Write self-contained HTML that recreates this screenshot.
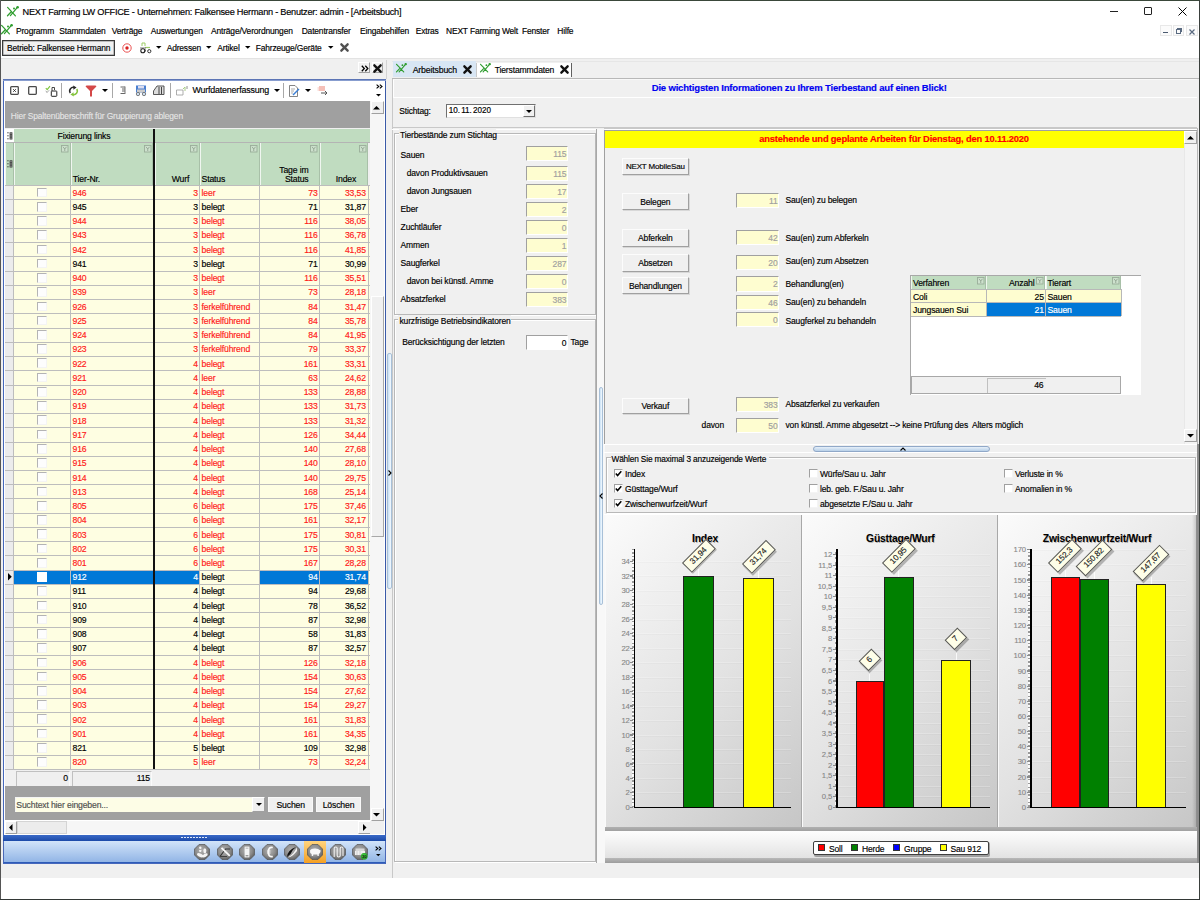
<!DOCTYPE html><html><head><meta charset="utf-8"><style>*{margin:0;padding:0;box-sizing:border-box}
html,body{width:1200px;height:900px;overflow:hidden;background:#f0f0f0;font-family:"Liberation Sans",sans-serif;font-size:8px;color:#000}
div{position:absolute;white-space:nowrap}
svg{position:absolute;overflow:visible}
</style></head><body><div style="left:0px;top:0px;width:1200px;height:58.5px;background:#fff"></div>
<div style="left:0px;top:58px;width:1200px;height:1px;background:#e3e3e3"></div>
<svg style="position:absolute;left:7px;top:6px" width="12" height="12" viewBox="0 0 12 12"><path d="M0.6 1.4 L4.1 5.1 M5.2 6.3 L8.4 9.8 M0.5 9.8 L4.5 5.5 M3.4 9.6 L10.6 1.2" stroke="#2f9d2f" stroke-width="1.25" fill="none" stroke-linecap="round"/><circle cx="7" cy="2.4" r="1" fill="#2f9d2f"/><circle cx="10.6" cy="1.2" r="1.3" fill="#2f9d2f"/></svg>
<div style="left:22.5px;top:7.71px;font-size:9.2px;line-height:9.2px;color:#000;letter-spacing:-0.17px;-webkit-text-stroke-width:0.16px;letter-spacing:-0.25px">NEXT Farming LW OFFICE - Unternehmen: Falkensee Hermann - Benutzer: admin - [Arbeitsbuch]</div>
<div style="left:1110px;top:10.8px;width:8px;height:1.2px;background:#222"></div>
<div style="left:1143.5px;top:7px;width:8px;height:8px;border:1.2px solid #222;border-radius:1px"></div>
<svg style="left:1177.5px;top:7px" width="9" height="9" viewBox="0 0 9 9"><path d="M0.5 0.5 L8.5 8.5 M8.5 0.5 L0.5 8.5" stroke="#000" stroke-width="1"/></svg>
<svg style="position:absolute;left:1px;top:24px" width="12" height="12" viewBox="0 0 12 12"><path d="M0.6 1.4 L4.1 5.1 M5.2 6.3 L8.4 9.8 M0.5 9.8 L4.5 5.5 M3.4 9.6 L10.6 1.2" stroke="#2f9d2f" stroke-width="1.25" fill="none" stroke-linecap="round"/><circle cx="7" cy="2.4" r="1" fill="#2f9d2f"/><circle cx="10.6" cy="1.2" r="1.3" fill="#2f9d2f"/></svg>
<div style="left:16px;top:26.94px;font-size:8.45px;line-height:8.45px;color:#000;letter-spacing:-0.16px;-webkit-text-stroke-width:0.16px;">Programm</div>
<div style="left:59.3px;top:26.94px;font-size:8.45px;line-height:8.45px;color:#000;letter-spacing:-0.16px;-webkit-text-stroke-width:0.16px;">Stammdaten</div>
<div style="left:111.7px;top:26.94px;font-size:8.45px;line-height:8.45px;color:#000;letter-spacing:-0.16px;-webkit-text-stroke-width:0.16px;">Verträge</div>
<div style="left:150.7px;top:26.94px;font-size:8.45px;line-height:8.45px;color:#000;letter-spacing:-0.16px;-webkit-text-stroke-width:0.16px;">Auswertungen</div>
<div style="left:211px;top:26.94px;font-size:8.45px;line-height:8.45px;color:#000;letter-spacing:-0.16px;-webkit-text-stroke-width:0.16px;">Anträge/Verordnungen</div>
<div style="left:301.7px;top:26.94px;font-size:8.45px;line-height:8.45px;color:#000;letter-spacing:-0.16px;-webkit-text-stroke-width:0.16px;">Datentransfer</div>
<div style="left:360px;top:26.94px;font-size:8.45px;line-height:8.45px;color:#000;letter-spacing:-0.16px;-webkit-text-stroke-width:0.16px;">Eingabehilfen</div>
<div style="left:415.7px;top:26.94px;font-size:8.45px;line-height:8.45px;color:#000;letter-spacing:-0.16px;-webkit-text-stroke-width:0.16px;">Extras</div>
<div style="left:446px;top:26.94px;font-size:8.45px;line-height:8.45px;color:#000;letter-spacing:-0.16px;-webkit-text-stroke-width:0.16px;">NEXT Farming Welt</div>
<div style="left:522px;top:26.94px;font-size:8.45px;line-height:8.45px;color:#000;letter-spacing:-0.16px;-webkit-text-stroke-width:0.16px;">Fenster</div>
<div style="left:557.3px;top:26.94px;font-size:8.45px;line-height:8.45px;color:#000;letter-spacing:-0.16px;-webkit-text-stroke-width:0.16px;">Hilfe</div>
<div style="left:1160px;top:25.3px;width:11.5px;height:10.5px;background:#fbfbfb;border:1px solid #e8e8e8"></div>
<div style="left:1172.5px;top:25.3px;width:11.5px;height:10.5px;background:#fbfbfb;border:1px solid #e8e8e8"></div>
<div style="left:1186px;top:25.3px;width:11.5px;height:10.5px;background:#fbfbfb;border:1px solid #e8e8e8"></div>
<div style="left:1162.5px;top:31.8px;width:5px;height:1.6px;background:#4a5a70"></div>
<div style="left:1175.5px;top:29px;width:5px;height:4.5px;border:1px solid #5a6a80"></div>
<div style="left:1176.8px;top:27.8px;width:5px;height:4.5px;border-top:1px solid #5a6a80;border-right:1px solid #5a6a80"></div>
<svg style="left:1188.5px;top:28.5px" width="6" height="6" viewBox="0 0 6 6"><path d="M0.5 0.5 L5.5 5.5 M5.5 0.5 L0.5 5.5" stroke="#5a6a80" stroke-width="1.2"/></svg>
<div style="left:2px;top:40px;width:112.5px;height:15.5px;background:#f0f0f0;border:1px solid #3a3a3a;box-shadow:inset 0 0 0 0.5px #888"></div>
<div style="left:7px;top:43.64px;font-size:8.45px;line-height:8.45px;color:#000;letter-spacing:-0.16px;-webkit-text-stroke-width:0.16px;">Betrieb: Falkensee Hermann</div>
<svg style="left:122px;top:42.7px" width="10" height="10" viewBox="0 0 10 10"><circle cx="5" cy="5" r="4.2" stroke="#e84040" stroke-width="0.9" fill="none"/><circle cx="5" cy="5" r="1.7" fill="#d82020"/></svg>
<svg style="left:138.5px;top:42px" width="14" height="12" viewBox="0 0 14 12"><path d="M3 4 L3 1 L6 1 L6 4" stroke="#9ccc66" stroke-width="1" fill="none"/><path d="M6 5.5 L11 5.5" stroke="#9ccc66" stroke-width="1.2"/><path d="M1 6 L7 6" stroke="#777" stroke-width="1"/><circle cx="3.8" cy="8.8" r="2" fill="none" stroke="#222" stroke-width="1.1"/><circle cx="10.3" cy="9.2" r="1.6" fill="none" stroke="#333" stroke-width="1"/><path d="M6.3 7.5 L6.3 9.5" stroke="#333" stroke-width="0.9"/></svg>
<svg style="position:absolute;left:155.85px;top:45.92px" width="5.5" height="2.75" viewBox="0 0 5.5 2.75"><path d="M0 0 L5.5 0 L2.75 2.75 Z" fill="#000"/></svg>
<div style="left:166.7px;top:43.64px;font-size:8.45px;line-height:8.45px;color:#000;letter-spacing:-0.16px;-webkit-text-stroke-width:0.16px;">Adressen</div>
<svg style="position:absolute;left:205.85px;top:45.92px" width="5.5" height="2.75" viewBox="0 0 5.5 2.75"><path d="M0 0 L5.5 0 L2.75 2.75 Z" fill="#000"/></svg>
<div style="left:217.3px;top:43.64px;font-size:8.45px;line-height:8.45px;color:#000;letter-spacing:-0.16px;-webkit-text-stroke-width:0.16px;">Artikel</div>
<svg style="position:absolute;left:244.85px;top:45.92px" width="5.5" height="2.75" viewBox="0 0 5.5 2.75"><path d="M0 0 L5.5 0 L2.75 2.75 Z" fill="#000"/></svg>
<div style="left:255.7px;top:43.64px;font-size:8.45px;line-height:8.45px;color:#000;letter-spacing:-0.16px;-webkit-text-stroke-width:0.16px;">Fahrzeuge/Geräte</div>
<svg style="position:absolute;left:327.65px;top:45.92px" width="5.5" height="2.75" viewBox="0 0 5.5 2.75"><path d="M0 0 L5.5 0 L2.75 2.75 Z" fill="#000"/></svg>
<svg style="position:absolute;left:340px;top:43px" width="9" height="9" viewBox="0 0 10 10"><path d="M1.5 1.5 L8.5 8.5 M8.5 1.5 L1.5 8.5" stroke="#505050" stroke-width="2.6" stroke-linecap="round"/></svg>
<div style="left:0px;top:0px;width:1200px;height:1px;background:#3a483a"></div>
<div style="left:0px;top:0px;width:1px;height:900px;background:#555"></div>
<div style="left:1199px;top:0px;width:1px;height:900px;background:#3a3f3c"></div>
<div style="left:0px;top:899px;width:1200px;height:1px;background:#333836"></div>
<div style="left:1px;top:877.5px;width:1198px;height:21.5px;background:#fff"></div>
<div style="left:358.3px;top:62.2px;width:11.7px;height:11.2px;background:#f0f0f0;border-top:1px solid #fff;border-left:1px solid #fff;border-right:1px solid #a0a0a0;border-bottom:1px solid #a0a0a0"></div>
<svg style="position:absolute;left:360.5px;top:64.5px" width="8" height="7" viewBox="0 0 8 7"><path d="M0.8 0.8 L3.3 3.5 L0.8 6.2 M4.3 0.8 L6.8 3.5 L4.3 6.2" stroke="#000" stroke-width="1.3" fill="none"/></svg>
<div style="left:371.6px;top:62.2px;width:11.7px;height:11.2px;background:#f0f0f0;border-top:1px solid #fff;border-left:1px solid #fff;border-right:1px solid #a0a0a0;border-bottom:1px solid #a0a0a0"></div>
<svg style="position:absolute;left:373px;top:63.5px" width="9" height="9" viewBox="0 0 10 10"><path d="M1.5 1.5 L8.5 8.5 M8.5 1.5 L1.5 8.5" stroke="#111" stroke-width="2.6" stroke-linecap="round"/></svg>
<div style="left:3.2px;top:78.8px;width:382.5px;height:785px;border:1px solid #4668bc;border-right:1.4px solid #3a5aa8;background:#fff"></div>
<div style="left:3.2px;top:78.6px;width:382.5px;height:2px;background:linear-gradient(#4560a8,#9fb2dc)"></div>
<svg style="left:10px;top:85.8px" width="9" height="9" viewBox="0 0 9 9"><rect x="0.7" y="0.7" width="7.6" height="7.6" rx="0.8" fill="#fff" stroke="#4a4a4a" stroke-width="1.3"/><path d="M3.2 3.2 L5.8 5.8 M5.8 3.2 L3.2 5.8" stroke="#222" stroke-width="0.9"/></svg>
<svg style="left:28.4px;top:85.8px" width="9" height="9" viewBox="0 0 9 9"><rect x="0.7" y="0.7" width="7.6" height="7.6" rx="0.8" fill="#fff" stroke="#4a4a4a" stroke-width="1.3"/></svg>
<svg style="left:45px;top:84.5px" width="13" height="12" viewBox="0 0 13 12"><path d="M0.8 3.2 L2.2 4.6 L5 1.2" stroke="#7cc43c" stroke-width="1.1" fill="none"/><path d="M0.8 6.2 L2.2 7.3 L4.2 5.2" stroke="#4a4a4a" stroke-width="0.9" fill="none" stroke-dasharray="1 0.6"/><path d="M7 2.5 L9.5 2.5 L9.5 5 M7 2.5 L7 6" stroke="#333" stroke-width="0.9" fill="none"/><rect x="6.3" y="6" width="5.5" height="5.3" rx="0.6" fill="#fff" stroke="#222" stroke-width="1"/></svg>
<div style="left:61.3px;top:83px;width:1px;height:15px;background:#a8a8a8"></div>
<svg style="left:67.5px;top:84.5px" width="11" height="12" viewBox="0 0 11 12"><path d="M6.5 2.6 A3.6 3.6 0 0 0 2.3 8" stroke="#2a2a2a" stroke-width="1.5" fill="none"/><path d="M5.2 0.4 L8.6 2.6 L5.4 4.8 Z" fill="#2a2a2a"/><path d="M4.5 9.4 A3.6 3.6 0 0 0 8.7 4" stroke="#86c440" stroke-width="1.5" fill="none"/><path d="M5.8 11.6 L2.4 9.4 L5.6 7.2 Z" fill="#86c440"/></svg>
<svg style="left:85px;top:84.5px" width="12" height="12" viewBox="0 0 12 12"><path d="M0.6 1.6 Q0.6 0.6 2 0.6 L10 0.6 Q11.4 0.6 11.4 1.6 L7 6 L7 11.4 L5 11.4 L5 6 Z" fill="#d44848"/></svg>
<svg style="position:absolute;left:101.5px;top:89px" width="6" height="3" viewBox="0 0 6 3"><path d="M0 0 L6 0 L3 3 Z" fill="#000"/></svg>
<div style="left:112px;top:83px;width:1px;height:15px;background:#a8a8a8"></div>
<svg style="left:119.5px;top:86px" width="6" height="9" viewBox="0 0 6 9"><path d="M0.5 1 L5 1 M2 3 L5 3 M2 5 L5 5 M0.5 7.5 L5 7.5" stroke="#555" stroke-width="0.9"/><path d="M5 0.5 L5 8" stroke="#777" stroke-width="1"/></svg>
<svg style="left:134.5px;top:85px" width="12" height="11" viewBox="0 0 12 11"><rect x="1" y="0.5" width="10" height="7" fill="#4a7fd0"/><rect x="3" y="1" width="6" height="2.5" fill="#dde"/><rect x="2" y="4.5" width="8" height="3" fill="#ccc"/><circle cx="3" cy="9" r="1.7" fill="#cde" stroke="#555" stroke-width="0.7"/><circle cx="9" cy="9" r="1.7" fill="#cde" stroke="#555" stroke-width="0.7"/></svg>
<svg style="left:152.5px;top:85px" width="12" height="11" viewBox="0 0 12 11"><path d="M0.5 9.5 L0.5 6 L4 1 L11 1 L11 9.5 Z" fill="#ddd" stroke="#444" stroke-width="0.9"/><path d="M6 2 L6 9 M8.5 2 L8.5 9" stroke="#444" stroke-width="1"/></svg>
<div style="left:170.3px;top:83px;width:1px;height:15px;background:#a8a8a8"></div>
<svg style="left:175.5px;top:85px" width="12" height="11" viewBox="0 0 12 11"><path d="M0.5 5 L7 5 L7 10 L0.5 10 Z" fill="#fff" stroke="#999" stroke-width="0.8"/><path d="M7 4 L9 2 L9 6" stroke="#ac8" stroke-width="1" fill="none"/><path d="M11 1 L11 4" stroke="#777" stroke-width="0.8"/></svg>
<div style="left:192.5px;top:86.3px;font-size:8.86px;line-height:8.86px;color:#000;letter-spacing:-0.17px;-webkit-text-stroke-width:0.16px;">Wurfdatenerfassung</div>
<svg style="position:absolute;left:273.5px;top:89px" width="6" height="3" viewBox="0 0 6 3"><path d="M0 0 L6 0 L3 3 Z" fill="#000"/></svg>
<div style="left:283px;top:83px;width:1px;height:15px;background:#a8a8a8"></div>
<svg style="left:289px;top:84.5px" width="11" height="12" viewBox="0 0 11 12"><path d="M0.5 0.5 L6 0.5 L8.5 3 L8.5 11.5 L0.5 11.5 Z" fill="#fff" stroke="#666" stroke-width="0.8"/><path d="M2 4 L6 4 M2 6 L5 6 M2 8 L4 8" stroke="#888" stroke-width="0.7"/><path d="M4 10 L10 4" stroke="#3a7fd5" stroke-width="1.4"/></svg>
<svg style="position:absolute;left:304.5px;top:89px" width="6" height="3" viewBox="0 0 6 3"><path d="M0 0 L6 0 L3 3 Z" fill="#000"/></svg>
<svg style="left:316.5px;top:85px" width="11" height="10" viewBox="0 0 11 10"><rect x="2" y="1" width="6" height="5" fill="#f5c0b8"/><path d="M0.5 3 L3 3 M0.5 5 L2 5" stroke="#f5c0b8" stroke-width="1"/><path d="M4 8 L10 8 M8 6 L10 8 L8 10" stroke="#555" stroke-width="1" fill="none"/></svg>
<svg style="left:375.6px;top:84.2px" width="7" height="5" viewBox="0 0 7 5"><path d="M0.6 0.6 L2.8 2.5 L0.6 4.4 M3.8 0.6 L6 2.5 L3.8 4.4" stroke="#000" stroke-width="1.1" fill="none"/></svg>
<svg style="position:absolute;left:375.9px;top:94.35px" width="5" height="2.5" viewBox="0 0 5 2.5"><path d="M0 0 L5 0 L2.5 2.5 Z" fill="#000"/></svg>
<div style="left:4.5px;top:101.3px;width:365.8px;height:26.5px;background:#a0a0a0"></div>
<div style="left:10.8px;top:111.84px;font-size:8.45px;line-height:8.45px;color:#e6e6e6;letter-spacing:-0.16px;-webkit-text-stroke-width:0.1px;">Hier Spaltenüberschrift für Gruppierung ablegen</div>
<div style="left:370.3px;top:101.3px;width:13.5px;height:719px;background:#f6f6f6"></div>
<div style="left:370.5px;top:101.3px;width:13px;height:13px;background:#f0f0f0;border-top:1px solid #fff;border-left:1px solid #fff;border-right:1px solid #a0a0a0;border-bottom:1px solid #a0a0a0"></div>
<svg style="position:absolute;left:373.4px;top:106.25px" width="7" height="3.5" viewBox="0 0 7 3.5"><path d="M0 3.5 L7 3.5 L3.5 0 Z" fill="#000"/></svg>
<div style="left:370.6px;top:295.5px;width:13px;height:241px;background:#f0f0f0;border-top:1px solid #fff;border-left:1px solid #fff;border-right:1px solid #a8a8a8;border-bottom:1px solid #a8a8a8"></div>
<div style="left:370.5px;top:807.5px;width:13px;height:13px;background:#f0f0f0;border-top:1px solid #fff;border-left:1px solid #fff;border-right:1px solid #a0a0a0;border-bottom:1px solid #a0a0a0"></div>
<svg style="position:absolute;left:373.4px;top:812.55px" width="7" height="3.5" viewBox="0 0 7 3.5"><path d="M0 0 L7 0 L3.5 3.5 Z" fill="#000"/></svg>
<div style="left:4.5px;top:128px;width:365.8px;height:57.5px;background:#f0f0f0"></div>
<div style="left:14px;top:128.6px;width:139.5px;height:13.3px;background:#c0dcc0"></div>
<div style="left:155px;top:128.6px;width:215.3px;height:13.3px;background:#c0dcc0"></div>
<div style="left:4.5px;top:128.6px;width:9px;height:13.3px;background:#fff"></div>
<div style="left:-216px;top:131.96px;width:600px;text-align:center;font-size:8.67px;line-height:8.67px;color:#000;letter-spacing:-0.16px;-webkit-text-stroke-width:0.16px;">Fixierung links</div>
<div style="left:4.5px;top:141.6px;width:365.8px;height:1.3px;background:#b4b4b4"></div>
<div style="left:4.5px;top:142.8px;width:9.1px;height:42.4px;background:#c0dcc0;border-left:1px solid #f0f6f0;border-right:1px solid #a8c0a8"></div>
<div style="left:13.6px;top:142.8px;width:57px;height:42.4px;background:#c0dcc0;border-left:1px solid #f0f6f0;border-right:1px solid #a8c0a8"></div>
<div style="left:70.6px;top:142.8px;width:82.4px;height:42.4px;background:#c0dcc0;border-left:1px solid #f0f6f0;border-right:1px solid #a8c0a8"></div>
<div style="left:155px;top:142.8px;width:44.6px;height:42.4px;background:#c0dcc0;border-left:1px solid #f0f6f0;border-right:1px solid #a8c0a8"></div>
<div style="left:199.6px;top:142.8px;width:60px;height:42.4px;background:#c0dcc0;border-left:1px solid #f0f6f0;border-right:1px solid #a8c0a8"></div>
<div style="left:259.6px;top:142.8px;width:60px;height:42.4px;background:#c0dcc0;border-left:1px solid #f0f6f0;border-right:1px solid #a8c0a8"></div>
<div style="left:319.6px;top:142.8px;width:48.4px;height:42.4px;background:#c0dcc0;border-left:1px solid #f0f6f0;border-right:1px solid #a8c0a8"></div>
<svg style="left:61px;top:144.8px" width="7.5" height="7.5" viewBox="0 0 7.5 7.5"><rect x="0.5" y="0.5" width="6.5" height="6.5" fill="#cde1cd" stroke="#9aae9a" stroke-width="0.9"/><path d="M2 1.8 L3.75 4 L5.5 1.8 M3.75 4 L3.75 6" stroke="#8a9c8a" stroke-width="0.8" fill="none"/></svg>
<svg style="left:143.5px;top:144.8px" width="7.5" height="7.5" viewBox="0 0 7.5 7.5"><rect x="0.5" y="0.5" width="6.5" height="6.5" fill="#cde1cd" stroke="#9aae9a" stroke-width="0.9"/><path d="M2 1.8 L3.75 4 L5.5 1.8 M3.75 4 L3.75 6" stroke="#8a9c8a" stroke-width="0.8" fill="none"/></svg>
<svg style="left:190px;top:144.8px" width="7.5" height="7.5" viewBox="0 0 7.5 7.5"><rect x="0.5" y="0.5" width="6.5" height="6.5" fill="#cde1cd" stroke="#9aae9a" stroke-width="0.9"/><path d="M2 1.8 L3.75 4 L5.5 1.8 M3.75 4 L3.75 6" stroke="#8a9c8a" stroke-width="0.8" fill="none"/></svg>
<svg style="left:250px;top:144.8px" width="7.5" height="7.5" viewBox="0 0 7.5 7.5"><rect x="0.5" y="0.5" width="6.5" height="6.5" fill="#cde1cd" stroke="#9aae9a" stroke-width="0.9"/><path d="M2 1.8 L3.75 4 L5.5 1.8 M3.75 4 L3.75 6" stroke="#8a9c8a" stroke-width="0.8" fill="none"/></svg>
<svg style="left:310px;top:144.8px" width="7.5" height="7.5" viewBox="0 0 7.5 7.5"><rect x="0.5" y="0.5" width="6.5" height="6.5" fill="#cde1cd" stroke="#9aae9a" stroke-width="0.9"/><path d="M2 1.8 L3.75 4 L5.5 1.8 M3.75 4 L3.75 6" stroke="#8a9c8a" stroke-width="0.8" fill="none"/></svg>
<svg style="left:358.5px;top:144.8px" width="7.5" height="7.5" viewBox="0 0 7.5 7.5"><rect x="0.5" y="0.5" width="6.5" height="6.5" fill="#cde1cd" stroke="#9aae9a" stroke-width="0.9"/><path d="M2 1.8 L3.75 4 L5.5 1.8 M3.75 4 L3.75 6" stroke="#8a9c8a" stroke-width="0.8" fill="none"/></svg>
<svg style="left:6.5px;top:131.8px" width="6" height="8" viewBox="0 0 6 8"><rect x="2.6" y="0.3" width="2.8" height="7.2" fill="#3c3c3c"/><path d="M3 1.5 L5 1.5 M3 3.2 L5 3.2 M3 4.9 L5 4.9 M3 6.4 L5 6.4" stroke="#9a9a9a" stroke-width="0.6"/><path d="M0.3 0.8 L1.6 0.8 M0.3 3.8 L1.6 3.8 M0.3 6.8 L1.6 6.8" stroke="#333" stroke-width="1"/></svg>
<svg style="left:6.5px;top:160px" width="6" height="8" viewBox="0 0 6 8"><rect x="2.6" y="0.3" width="2.8" height="7.2" fill="#3c3c3c"/><path d="M3 1.5 L5 1.5 M3 3.2 L5 3.2 M3 4.9 L5 4.9 M3 6.4 L5 6.4" stroke="#9a9a9a" stroke-width="0.6"/><path d="M0.3 0.8 L1.6 0.8 M0.3 3.8 L1.6 3.8 M0.3 6.8 L1.6 6.8" stroke="#333" stroke-width="1"/></svg>
<div style="left:72.8px;top:175.46px;font-size:8.67px;line-height:8.67px;color:#000;letter-spacing:-0.16px;-webkit-text-stroke-width:0.16px;">Tier-Nr.</div>
<div style="left:-210.8px;top:175.46px;width:400px;text-align:right;font-size:8.67px;line-height:8.67px;color:#000;letter-spacing:-0.16px;-webkit-text-stroke-width:0.16px;">Wurf</div>
<div style="left:201.6px;top:175.46px;font-size:8.67px;line-height:8.67px;color:#000;letter-spacing:-0.16px;-webkit-text-stroke-width:0.16px;">Status</div>
<div style="left:-91.5px;top:165.56px;width:400px;text-align:right;font-size:8.67px;line-height:8.67px;color:#000;letter-spacing:-0.16px;-webkit-text-stroke-width:0.16px;">Tage im</div>
<div style="left:-91.5px;top:175.46px;width:400px;text-align:right;font-size:8.67px;line-height:8.67px;color:#000;letter-spacing:-0.16px;-webkit-text-stroke-width:0.16px;">Status</div>
<div style="left:-43.8px;top:175.46px;width:400px;text-align:right;font-size:8.67px;line-height:8.67px;color:#000;letter-spacing:-0.16px;-webkit-text-stroke-width:0.16px;">Index</div>
<div style="left:14px;top:185.2px;width:356.2px;height:583.84px;background:#fefee2"></div>
<div style="left:4.5px;top:185.2px;width:9.5px;height:583.84px;background:#ececec"></div>
<div style="left:4.5px;top:185.2px;width:365.7px;height:1px;background:#bdbdbd"></div>
<div style="left:37.3px;top:187.6px;width:9.7px;height:9.7px;background:#fdfdfd;border-top:1.5px solid #b4b4b4;border-left:1.5px solid #b4b4b4;border-right:1px solid #f4f4f4;border-bottom:1px solid #f4f4f4"></div>
<div style="left:72.5px;top:188.76px;font-size:8.67px;line-height:8.67px;color:#ff1a1a;letter-spacing:-0.16px;-webkit-text-stroke-width:0.16px;">946</div>
<div style="left:-202px;top:188.76px;width:400px;text-align:right;font-size:8.67px;line-height:8.67px;color:#ff1a1a;letter-spacing:-0.16px;-webkit-text-stroke-width:0.16px;">3</div>
<div style="left:201.6px;top:188.76px;font-size:8.67px;line-height:8.67px;color:#ff1a1a;letter-spacing:-0.16px;-webkit-text-stroke-width:0.16px;">leer</div>
<div style="left:-82.4px;top:188.76px;width:400px;text-align:right;font-size:8.67px;line-height:8.67px;color:#ff1a1a;letter-spacing:-0.16px;-webkit-text-stroke-width:0.16px;">73</div>
<div style="left:-34.2px;top:188.76px;width:400px;text-align:right;font-size:8.67px;line-height:8.67px;color:#ff1a1a;letter-spacing:-0.16px;-webkit-text-stroke-width:0.16px;">33,53</div>
<div style="left:4.5px;top:199.44px;width:365.7px;height:1px;background:#bdbdbd"></div>
<div style="left:37.3px;top:201.84px;width:9.7px;height:9.7px;background:#fdfdfd;border-top:1.5px solid #b4b4b4;border-left:1.5px solid #b4b4b4;border-right:1px solid #f4f4f4;border-bottom:1px solid #f4f4f4"></div>
<div style="left:72.5px;top:203px;font-size:8.67px;line-height:8.67px;color:#000;letter-spacing:-0.16px;-webkit-text-stroke-width:0.16px;">945</div>
<div style="left:-202px;top:203px;width:400px;text-align:right;font-size:8.67px;line-height:8.67px;color:#000;letter-spacing:-0.16px;-webkit-text-stroke-width:0.16px;">3</div>
<div style="left:201.6px;top:203px;font-size:8.67px;line-height:8.67px;color:#000;letter-spacing:-0.16px;-webkit-text-stroke-width:0.16px;">belegt</div>
<div style="left:-82.4px;top:203px;width:400px;text-align:right;font-size:8.67px;line-height:8.67px;color:#000;letter-spacing:-0.16px;-webkit-text-stroke-width:0.16px;">71</div>
<div style="left:-34.2px;top:203px;width:400px;text-align:right;font-size:8.67px;line-height:8.67px;color:#000;letter-spacing:-0.16px;-webkit-text-stroke-width:0.16px;">31,87</div>
<div style="left:4.5px;top:213.68px;width:365.7px;height:1px;background:#bdbdbd"></div>
<div style="left:37.3px;top:216.08px;width:9.7px;height:9.7px;background:#fdfdfd;border-top:1.5px solid #b4b4b4;border-left:1.5px solid #b4b4b4;border-right:1px solid #f4f4f4;border-bottom:1px solid #f4f4f4"></div>
<div style="left:72.5px;top:217.24px;font-size:8.67px;line-height:8.67px;color:#ff1a1a;letter-spacing:-0.16px;-webkit-text-stroke-width:0.16px;">944</div>
<div style="left:-202px;top:217.24px;width:400px;text-align:right;font-size:8.67px;line-height:8.67px;color:#ff1a1a;letter-spacing:-0.16px;-webkit-text-stroke-width:0.16px;">3</div>
<div style="left:201.6px;top:217.24px;font-size:8.67px;line-height:8.67px;color:#ff1a1a;letter-spacing:-0.16px;-webkit-text-stroke-width:0.16px;">belegt</div>
<div style="left:-82.4px;top:217.24px;width:400px;text-align:right;font-size:8.67px;line-height:8.67px;color:#ff1a1a;letter-spacing:-0.16px;-webkit-text-stroke-width:0.16px;">116</div>
<div style="left:-34.2px;top:217.24px;width:400px;text-align:right;font-size:8.67px;line-height:8.67px;color:#ff1a1a;letter-spacing:-0.16px;-webkit-text-stroke-width:0.16px;">38,05</div>
<div style="left:4.5px;top:227.92px;width:365.7px;height:1px;background:#bdbdbd"></div>
<div style="left:37.3px;top:230.32px;width:9.7px;height:9.7px;background:#fdfdfd;border-top:1.5px solid #b4b4b4;border-left:1.5px solid #b4b4b4;border-right:1px solid #f4f4f4;border-bottom:1px solid #f4f4f4"></div>
<div style="left:72.5px;top:231.48px;font-size:8.67px;line-height:8.67px;color:#ff1a1a;letter-spacing:-0.16px;-webkit-text-stroke-width:0.16px;">943</div>
<div style="left:-202px;top:231.48px;width:400px;text-align:right;font-size:8.67px;line-height:8.67px;color:#ff1a1a;letter-spacing:-0.16px;-webkit-text-stroke-width:0.16px;">3</div>
<div style="left:201.6px;top:231.48px;font-size:8.67px;line-height:8.67px;color:#ff1a1a;letter-spacing:-0.16px;-webkit-text-stroke-width:0.16px;">belegt</div>
<div style="left:-82.4px;top:231.48px;width:400px;text-align:right;font-size:8.67px;line-height:8.67px;color:#ff1a1a;letter-spacing:-0.16px;-webkit-text-stroke-width:0.16px;">116</div>
<div style="left:-34.2px;top:231.48px;width:400px;text-align:right;font-size:8.67px;line-height:8.67px;color:#ff1a1a;letter-spacing:-0.16px;-webkit-text-stroke-width:0.16px;">36,78</div>
<div style="left:4.5px;top:242.16px;width:365.7px;height:1px;background:#bdbdbd"></div>
<div style="left:37.3px;top:244.56px;width:9.7px;height:9.7px;background:#fdfdfd;border-top:1.5px solid #b4b4b4;border-left:1.5px solid #b4b4b4;border-right:1px solid #f4f4f4;border-bottom:1px solid #f4f4f4"></div>
<div style="left:72.5px;top:245.72px;font-size:8.67px;line-height:8.67px;color:#ff1a1a;letter-spacing:-0.16px;-webkit-text-stroke-width:0.16px;">942</div>
<div style="left:-202px;top:245.72px;width:400px;text-align:right;font-size:8.67px;line-height:8.67px;color:#ff1a1a;letter-spacing:-0.16px;-webkit-text-stroke-width:0.16px;">3</div>
<div style="left:201.6px;top:245.72px;font-size:8.67px;line-height:8.67px;color:#ff1a1a;letter-spacing:-0.16px;-webkit-text-stroke-width:0.16px;">belegt</div>
<div style="left:-82.4px;top:245.72px;width:400px;text-align:right;font-size:8.67px;line-height:8.67px;color:#ff1a1a;letter-spacing:-0.16px;-webkit-text-stroke-width:0.16px;">116</div>
<div style="left:-34.2px;top:245.72px;width:400px;text-align:right;font-size:8.67px;line-height:8.67px;color:#ff1a1a;letter-spacing:-0.16px;-webkit-text-stroke-width:0.16px;">41,85</div>
<div style="left:4.5px;top:256.4px;width:365.7px;height:1px;background:#bdbdbd"></div>
<div style="left:37.3px;top:258.8px;width:9.7px;height:9.7px;background:#fdfdfd;border-top:1.5px solid #b4b4b4;border-left:1.5px solid #b4b4b4;border-right:1px solid #f4f4f4;border-bottom:1px solid #f4f4f4"></div>
<div style="left:72.5px;top:259.96px;font-size:8.67px;line-height:8.67px;color:#000;letter-spacing:-0.16px;-webkit-text-stroke-width:0.16px;">941</div>
<div style="left:-202px;top:259.96px;width:400px;text-align:right;font-size:8.67px;line-height:8.67px;color:#000;letter-spacing:-0.16px;-webkit-text-stroke-width:0.16px;">3</div>
<div style="left:201.6px;top:259.96px;font-size:8.67px;line-height:8.67px;color:#000;letter-spacing:-0.16px;-webkit-text-stroke-width:0.16px;">belegt</div>
<div style="left:-82.4px;top:259.96px;width:400px;text-align:right;font-size:8.67px;line-height:8.67px;color:#000;letter-spacing:-0.16px;-webkit-text-stroke-width:0.16px;">71</div>
<div style="left:-34.2px;top:259.96px;width:400px;text-align:right;font-size:8.67px;line-height:8.67px;color:#000;letter-spacing:-0.16px;-webkit-text-stroke-width:0.16px;">30,99</div>
<div style="left:4.5px;top:270.64px;width:365.7px;height:1px;background:#bdbdbd"></div>
<div style="left:37.3px;top:273.04px;width:9.7px;height:9.7px;background:#fdfdfd;border-top:1.5px solid #b4b4b4;border-left:1.5px solid #b4b4b4;border-right:1px solid #f4f4f4;border-bottom:1px solid #f4f4f4"></div>
<div style="left:72.5px;top:274.2px;font-size:8.67px;line-height:8.67px;color:#ff1a1a;letter-spacing:-0.16px;-webkit-text-stroke-width:0.16px;">940</div>
<div style="left:-202px;top:274.2px;width:400px;text-align:right;font-size:8.67px;line-height:8.67px;color:#ff1a1a;letter-spacing:-0.16px;-webkit-text-stroke-width:0.16px;">3</div>
<div style="left:201.6px;top:274.2px;font-size:8.67px;line-height:8.67px;color:#ff1a1a;letter-spacing:-0.16px;-webkit-text-stroke-width:0.16px;">belegt</div>
<div style="left:-82.4px;top:274.2px;width:400px;text-align:right;font-size:8.67px;line-height:8.67px;color:#ff1a1a;letter-spacing:-0.16px;-webkit-text-stroke-width:0.16px;">116</div>
<div style="left:-34.2px;top:274.2px;width:400px;text-align:right;font-size:8.67px;line-height:8.67px;color:#ff1a1a;letter-spacing:-0.16px;-webkit-text-stroke-width:0.16px;">35,51</div>
<div style="left:4.5px;top:284.88px;width:365.7px;height:1px;background:#bdbdbd"></div>
<div style="left:37.3px;top:287.28px;width:9.7px;height:9.7px;background:#fdfdfd;border-top:1.5px solid #b4b4b4;border-left:1.5px solid #b4b4b4;border-right:1px solid #f4f4f4;border-bottom:1px solid #f4f4f4"></div>
<div style="left:72.5px;top:288.44px;font-size:8.67px;line-height:8.67px;color:#ff1a1a;letter-spacing:-0.16px;-webkit-text-stroke-width:0.16px;">939</div>
<div style="left:-202px;top:288.44px;width:400px;text-align:right;font-size:8.67px;line-height:8.67px;color:#ff1a1a;letter-spacing:-0.16px;-webkit-text-stroke-width:0.16px;">3</div>
<div style="left:201.6px;top:288.44px;font-size:8.67px;line-height:8.67px;color:#ff1a1a;letter-spacing:-0.16px;-webkit-text-stroke-width:0.16px;">leer</div>
<div style="left:-82.4px;top:288.44px;width:400px;text-align:right;font-size:8.67px;line-height:8.67px;color:#ff1a1a;letter-spacing:-0.16px;-webkit-text-stroke-width:0.16px;">73</div>
<div style="left:-34.2px;top:288.44px;width:400px;text-align:right;font-size:8.67px;line-height:8.67px;color:#ff1a1a;letter-spacing:-0.16px;-webkit-text-stroke-width:0.16px;">28,18</div>
<div style="left:4.5px;top:299.12px;width:365.7px;height:1px;background:#bdbdbd"></div>
<div style="left:37.3px;top:301.52px;width:9.7px;height:9.7px;background:#fdfdfd;border-top:1.5px solid #b4b4b4;border-left:1.5px solid #b4b4b4;border-right:1px solid #f4f4f4;border-bottom:1px solid #f4f4f4"></div>
<div style="left:72.5px;top:302.68px;font-size:8.67px;line-height:8.67px;color:#ff1a1a;letter-spacing:-0.16px;-webkit-text-stroke-width:0.16px;">926</div>
<div style="left:-202px;top:302.68px;width:400px;text-align:right;font-size:8.67px;line-height:8.67px;color:#ff1a1a;letter-spacing:-0.16px;-webkit-text-stroke-width:0.16px;">3</div>
<div style="left:201.6px;top:302.68px;font-size:8.67px;line-height:8.67px;color:#ff1a1a;letter-spacing:-0.16px;-webkit-text-stroke-width:0.16px;">ferkelführend</div>
<div style="left:-82.4px;top:302.68px;width:400px;text-align:right;font-size:8.67px;line-height:8.67px;color:#ff1a1a;letter-spacing:-0.16px;-webkit-text-stroke-width:0.16px;">84</div>
<div style="left:-34.2px;top:302.68px;width:400px;text-align:right;font-size:8.67px;line-height:8.67px;color:#ff1a1a;letter-spacing:-0.16px;-webkit-text-stroke-width:0.16px;">31,47</div>
<div style="left:4.5px;top:313.36px;width:365.7px;height:1px;background:#bdbdbd"></div>
<div style="left:37.3px;top:315.76px;width:9.7px;height:9.7px;background:#fdfdfd;border-top:1.5px solid #b4b4b4;border-left:1.5px solid #b4b4b4;border-right:1px solid #f4f4f4;border-bottom:1px solid #f4f4f4"></div>
<div style="left:72.5px;top:316.92px;font-size:8.67px;line-height:8.67px;color:#ff1a1a;letter-spacing:-0.16px;-webkit-text-stroke-width:0.16px;">925</div>
<div style="left:-202px;top:316.92px;width:400px;text-align:right;font-size:8.67px;line-height:8.67px;color:#ff1a1a;letter-spacing:-0.16px;-webkit-text-stroke-width:0.16px;">3</div>
<div style="left:201.6px;top:316.92px;font-size:8.67px;line-height:8.67px;color:#ff1a1a;letter-spacing:-0.16px;-webkit-text-stroke-width:0.16px;">ferkelführend</div>
<div style="left:-82.4px;top:316.92px;width:400px;text-align:right;font-size:8.67px;line-height:8.67px;color:#ff1a1a;letter-spacing:-0.16px;-webkit-text-stroke-width:0.16px;">84</div>
<div style="left:-34.2px;top:316.92px;width:400px;text-align:right;font-size:8.67px;line-height:8.67px;color:#ff1a1a;letter-spacing:-0.16px;-webkit-text-stroke-width:0.16px;">35,78</div>
<div style="left:4.5px;top:327.6px;width:365.7px;height:1px;background:#bdbdbd"></div>
<div style="left:37.3px;top:330px;width:9.7px;height:9.7px;background:#fdfdfd;border-top:1.5px solid #b4b4b4;border-left:1.5px solid #b4b4b4;border-right:1px solid #f4f4f4;border-bottom:1px solid #f4f4f4"></div>
<div style="left:72.5px;top:331.16px;font-size:8.67px;line-height:8.67px;color:#ff1a1a;letter-spacing:-0.16px;-webkit-text-stroke-width:0.16px;">924</div>
<div style="left:-202px;top:331.16px;width:400px;text-align:right;font-size:8.67px;line-height:8.67px;color:#ff1a1a;letter-spacing:-0.16px;-webkit-text-stroke-width:0.16px;">3</div>
<div style="left:201.6px;top:331.16px;font-size:8.67px;line-height:8.67px;color:#ff1a1a;letter-spacing:-0.16px;-webkit-text-stroke-width:0.16px;">ferkelführend</div>
<div style="left:-82.4px;top:331.16px;width:400px;text-align:right;font-size:8.67px;line-height:8.67px;color:#ff1a1a;letter-spacing:-0.16px;-webkit-text-stroke-width:0.16px;">84</div>
<div style="left:-34.2px;top:331.16px;width:400px;text-align:right;font-size:8.67px;line-height:8.67px;color:#ff1a1a;letter-spacing:-0.16px;-webkit-text-stroke-width:0.16px;">41,95</div>
<div style="left:4.5px;top:341.84px;width:365.7px;height:1px;background:#bdbdbd"></div>
<div style="left:37.3px;top:344.24px;width:9.7px;height:9.7px;background:#fdfdfd;border-top:1.5px solid #b4b4b4;border-left:1.5px solid #b4b4b4;border-right:1px solid #f4f4f4;border-bottom:1px solid #f4f4f4"></div>
<div style="left:72.5px;top:345.4px;font-size:8.67px;line-height:8.67px;color:#ff1a1a;letter-spacing:-0.16px;-webkit-text-stroke-width:0.16px;">923</div>
<div style="left:-202px;top:345.4px;width:400px;text-align:right;font-size:8.67px;line-height:8.67px;color:#ff1a1a;letter-spacing:-0.16px;-webkit-text-stroke-width:0.16px;">3</div>
<div style="left:201.6px;top:345.4px;font-size:8.67px;line-height:8.67px;color:#ff1a1a;letter-spacing:-0.16px;-webkit-text-stroke-width:0.16px;">ferkelführend</div>
<div style="left:-82.4px;top:345.4px;width:400px;text-align:right;font-size:8.67px;line-height:8.67px;color:#ff1a1a;letter-spacing:-0.16px;-webkit-text-stroke-width:0.16px;">79</div>
<div style="left:-34.2px;top:345.4px;width:400px;text-align:right;font-size:8.67px;line-height:8.67px;color:#ff1a1a;letter-spacing:-0.16px;-webkit-text-stroke-width:0.16px;">33,37</div>
<div style="left:4.5px;top:356.08px;width:365.7px;height:1px;background:#bdbdbd"></div>
<div style="left:37.3px;top:358.48px;width:9.7px;height:9.7px;background:#fdfdfd;border-top:1.5px solid #b4b4b4;border-left:1.5px solid #b4b4b4;border-right:1px solid #f4f4f4;border-bottom:1px solid #f4f4f4"></div>
<div style="left:72.5px;top:359.64px;font-size:8.67px;line-height:8.67px;color:#ff1a1a;letter-spacing:-0.16px;-webkit-text-stroke-width:0.16px;">922</div>
<div style="left:-202px;top:359.64px;width:400px;text-align:right;font-size:8.67px;line-height:8.67px;color:#ff1a1a;letter-spacing:-0.16px;-webkit-text-stroke-width:0.16px;">4</div>
<div style="left:201.6px;top:359.64px;font-size:8.67px;line-height:8.67px;color:#ff1a1a;letter-spacing:-0.16px;-webkit-text-stroke-width:0.16px;">belegt</div>
<div style="left:-82.4px;top:359.64px;width:400px;text-align:right;font-size:8.67px;line-height:8.67px;color:#ff1a1a;letter-spacing:-0.16px;-webkit-text-stroke-width:0.16px;">161</div>
<div style="left:-34.2px;top:359.64px;width:400px;text-align:right;font-size:8.67px;line-height:8.67px;color:#ff1a1a;letter-spacing:-0.16px;-webkit-text-stroke-width:0.16px;">33,31</div>
<div style="left:4.5px;top:370.32px;width:365.7px;height:1px;background:#bdbdbd"></div>
<div style="left:37.3px;top:372.72px;width:9.7px;height:9.7px;background:#fdfdfd;border-top:1.5px solid #b4b4b4;border-left:1.5px solid #b4b4b4;border-right:1px solid #f4f4f4;border-bottom:1px solid #f4f4f4"></div>
<div style="left:72.5px;top:373.88px;font-size:8.67px;line-height:8.67px;color:#ff1a1a;letter-spacing:-0.16px;-webkit-text-stroke-width:0.16px;">921</div>
<div style="left:-202px;top:373.88px;width:400px;text-align:right;font-size:8.67px;line-height:8.67px;color:#ff1a1a;letter-spacing:-0.16px;-webkit-text-stroke-width:0.16px;">4</div>
<div style="left:201.6px;top:373.88px;font-size:8.67px;line-height:8.67px;color:#ff1a1a;letter-spacing:-0.16px;-webkit-text-stroke-width:0.16px;">leer</div>
<div style="left:-82.4px;top:373.88px;width:400px;text-align:right;font-size:8.67px;line-height:8.67px;color:#ff1a1a;letter-spacing:-0.16px;-webkit-text-stroke-width:0.16px;">63</div>
<div style="left:-34.2px;top:373.88px;width:400px;text-align:right;font-size:8.67px;line-height:8.67px;color:#ff1a1a;letter-spacing:-0.16px;-webkit-text-stroke-width:0.16px;">24,62</div>
<div style="left:4.5px;top:384.56px;width:365.7px;height:1px;background:#bdbdbd"></div>
<div style="left:37.3px;top:386.96px;width:9.7px;height:9.7px;background:#fdfdfd;border-top:1.5px solid #b4b4b4;border-left:1.5px solid #b4b4b4;border-right:1px solid #f4f4f4;border-bottom:1px solid #f4f4f4"></div>
<div style="left:72.5px;top:388.12px;font-size:8.67px;line-height:8.67px;color:#ff1a1a;letter-spacing:-0.16px;-webkit-text-stroke-width:0.16px;">920</div>
<div style="left:-202px;top:388.12px;width:400px;text-align:right;font-size:8.67px;line-height:8.67px;color:#ff1a1a;letter-spacing:-0.16px;-webkit-text-stroke-width:0.16px;">4</div>
<div style="left:201.6px;top:388.12px;font-size:8.67px;line-height:8.67px;color:#ff1a1a;letter-spacing:-0.16px;-webkit-text-stroke-width:0.16px;">belegt</div>
<div style="left:-82.4px;top:388.12px;width:400px;text-align:right;font-size:8.67px;line-height:8.67px;color:#ff1a1a;letter-spacing:-0.16px;-webkit-text-stroke-width:0.16px;">133</div>
<div style="left:-34.2px;top:388.12px;width:400px;text-align:right;font-size:8.67px;line-height:8.67px;color:#ff1a1a;letter-spacing:-0.16px;-webkit-text-stroke-width:0.16px;">28,88</div>
<div style="left:4.5px;top:398.8px;width:365.7px;height:1px;background:#bdbdbd"></div>
<div style="left:37.3px;top:401.2px;width:9.7px;height:9.7px;background:#fdfdfd;border-top:1.5px solid #b4b4b4;border-left:1.5px solid #b4b4b4;border-right:1px solid #f4f4f4;border-bottom:1px solid #f4f4f4"></div>
<div style="left:72.5px;top:402.36px;font-size:8.67px;line-height:8.67px;color:#ff1a1a;letter-spacing:-0.16px;-webkit-text-stroke-width:0.16px;">919</div>
<div style="left:-202px;top:402.36px;width:400px;text-align:right;font-size:8.67px;line-height:8.67px;color:#ff1a1a;letter-spacing:-0.16px;-webkit-text-stroke-width:0.16px;">4</div>
<div style="left:201.6px;top:402.36px;font-size:8.67px;line-height:8.67px;color:#ff1a1a;letter-spacing:-0.16px;-webkit-text-stroke-width:0.16px;">belegt</div>
<div style="left:-82.4px;top:402.36px;width:400px;text-align:right;font-size:8.67px;line-height:8.67px;color:#ff1a1a;letter-spacing:-0.16px;-webkit-text-stroke-width:0.16px;">133</div>
<div style="left:-34.2px;top:402.36px;width:400px;text-align:right;font-size:8.67px;line-height:8.67px;color:#ff1a1a;letter-spacing:-0.16px;-webkit-text-stroke-width:0.16px;">31,73</div>
<div style="left:4.5px;top:413.04px;width:365.7px;height:1px;background:#bdbdbd"></div>
<div style="left:37.3px;top:415.44px;width:9.7px;height:9.7px;background:#fdfdfd;border-top:1.5px solid #b4b4b4;border-left:1.5px solid #b4b4b4;border-right:1px solid #f4f4f4;border-bottom:1px solid #f4f4f4"></div>
<div style="left:72.5px;top:416.6px;font-size:8.67px;line-height:8.67px;color:#ff1a1a;letter-spacing:-0.16px;-webkit-text-stroke-width:0.16px;">918</div>
<div style="left:-202px;top:416.6px;width:400px;text-align:right;font-size:8.67px;line-height:8.67px;color:#ff1a1a;letter-spacing:-0.16px;-webkit-text-stroke-width:0.16px;">4</div>
<div style="left:201.6px;top:416.6px;font-size:8.67px;line-height:8.67px;color:#ff1a1a;letter-spacing:-0.16px;-webkit-text-stroke-width:0.16px;">belegt</div>
<div style="left:-82.4px;top:416.6px;width:400px;text-align:right;font-size:8.67px;line-height:8.67px;color:#ff1a1a;letter-spacing:-0.16px;-webkit-text-stroke-width:0.16px;">133</div>
<div style="left:-34.2px;top:416.6px;width:400px;text-align:right;font-size:8.67px;line-height:8.67px;color:#ff1a1a;letter-spacing:-0.16px;-webkit-text-stroke-width:0.16px;">31,32</div>
<div style="left:4.5px;top:427.28px;width:365.7px;height:1px;background:#bdbdbd"></div>
<div style="left:37.3px;top:429.68px;width:9.7px;height:9.7px;background:#fdfdfd;border-top:1.5px solid #b4b4b4;border-left:1.5px solid #b4b4b4;border-right:1px solid #f4f4f4;border-bottom:1px solid #f4f4f4"></div>
<div style="left:72.5px;top:430.84px;font-size:8.67px;line-height:8.67px;color:#ff1a1a;letter-spacing:-0.16px;-webkit-text-stroke-width:0.16px;">917</div>
<div style="left:-202px;top:430.84px;width:400px;text-align:right;font-size:8.67px;line-height:8.67px;color:#ff1a1a;letter-spacing:-0.16px;-webkit-text-stroke-width:0.16px;">4</div>
<div style="left:201.6px;top:430.84px;font-size:8.67px;line-height:8.67px;color:#ff1a1a;letter-spacing:-0.16px;-webkit-text-stroke-width:0.16px;">belegt</div>
<div style="left:-82.4px;top:430.84px;width:400px;text-align:right;font-size:8.67px;line-height:8.67px;color:#ff1a1a;letter-spacing:-0.16px;-webkit-text-stroke-width:0.16px;">126</div>
<div style="left:-34.2px;top:430.84px;width:400px;text-align:right;font-size:8.67px;line-height:8.67px;color:#ff1a1a;letter-spacing:-0.16px;-webkit-text-stroke-width:0.16px;">34,44</div>
<div style="left:4.5px;top:441.52px;width:365.7px;height:1px;background:#bdbdbd"></div>
<div style="left:37.3px;top:443.92px;width:9.7px;height:9.7px;background:#fdfdfd;border-top:1.5px solid #b4b4b4;border-left:1.5px solid #b4b4b4;border-right:1px solid #f4f4f4;border-bottom:1px solid #f4f4f4"></div>
<div style="left:72.5px;top:445.08px;font-size:8.67px;line-height:8.67px;color:#ff1a1a;letter-spacing:-0.16px;-webkit-text-stroke-width:0.16px;">916</div>
<div style="left:-202px;top:445.08px;width:400px;text-align:right;font-size:8.67px;line-height:8.67px;color:#ff1a1a;letter-spacing:-0.16px;-webkit-text-stroke-width:0.16px;">4</div>
<div style="left:201.6px;top:445.08px;font-size:8.67px;line-height:8.67px;color:#ff1a1a;letter-spacing:-0.16px;-webkit-text-stroke-width:0.16px;">belegt</div>
<div style="left:-82.4px;top:445.08px;width:400px;text-align:right;font-size:8.67px;line-height:8.67px;color:#ff1a1a;letter-spacing:-0.16px;-webkit-text-stroke-width:0.16px;">140</div>
<div style="left:-34.2px;top:445.08px;width:400px;text-align:right;font-size:8.67px;line-height:8.67px;color:#ff1a1a;letter-spacing:-0.16px;-webkit-text-stroke-width:0.16px;">27,68</div>
<div style="left:4.5px;top:455.76px;width:365.7px;height:1px;background:#bdbdbd"></div>
<div style="left:37.3px;top:458.16px;width:9.7px;height:9.7px;background:#fdfdfd;border-top:1.5px solid #b4b4b4;border-left:1.5px solid #b4b4b4;border-right:1px solid #f4f4f4;border-bottom:1px solid #f4f4f4"></div>
<div style="left:72.5px;top:459.32px;font-size:8.67px;line-height:8.67px;color:#ff1a1a;letter-spacing:-0.16px;-webkit-text-stroke-width:0.16px;">915</div>
<div style="left:-202px;top:459.32px;width:400px;text-align:right;font-size:8.67px;line-height:8.67px;color:#ff1a1a;letter-spacing:-0.16px;-webkit-text-stroke-width:0.16px;">4</div>
<div style="left:201.6px;top:459.32px;font-size:8.67px;line-height:8.67px;color:#ff1a1a;letter-spacing:-0.16px;-webkit-text-stroke-width:0.16px;">belegt</div>
<div style="left:-82.4px;top:459.32px;width:400px;text-align:right;font-size:8.67px;line-height:8.67px;color:#ff1a1a;letter-spacing:-0.16px;-webkit-text-stroke-width:0.16px;">140</div>
<div style="left:-34.2px;top:459.32px;width:400px;text-align:right;font-size:8.67px;line-height:8.67px;color:#ff1a1a;letter-spacing:-0.16px;-webkit-text-stroke-width:0.16px;">28,10</div>
<div style="left:4.5px;top:470px;width:365.7px;height:1px;background:#bdbdbd"></div>
<div style="left:37.3px;top:472.4px;width:9.7px;height:9.7px;background:#fdfdfd;border-top:1.5px solid #b4b4b4;border-left:1.5px solid #b4b4b4;border-right:1px solid #f4f4f4;border-bottom:1px solid #f4f4f4"></div>
<div style="left:72.5px;top:473.56px;font-size:8.67px;line-height:8.67px;color:#ff1a1a;letter-spacing:-0.16px;-webkit-text-stroke-width:0.16px;">914</div>
<div style="left:-202px;top:473.56px;width:400px;text-align:right;font-size:8.67px;line-height:8.67px;color:#ff1a1a;letter-spacing:-0.16px;-webkit-text-stroke-width:0.16px;">4</div>
<div style="left:201.6px;top:473.56px;font-size:8.67px;line-height:8.67px;color:#ff1a1a;letter-spacing:-0.16px;-webkit-text-stroke-width:0.16px;">belegt</div>
<div style="left:-82.4px;top:473.56px;width:400px;text-align:right;font-size:8.67px;line-height:8.67px;color:#ff1a1a;letter-spacing:-0.16px;-webkit-text-stroke-width:0.16px;">140</div>
<div style="left:-34.2px;top:473.56px;width:400px;text-align:right;font-size:8.67px;line-height:8.67px;color:#ff1a1a;letter-spacing:-0.16px;-webkit-text-stroke-width:0.16px;">29,75</div>
<div style="left:4.5px;top:484.24px;width:365.7px;height:1px;background:#bdbdbd"></div>
<div style="left:37.3px;top:486.64px;width:9.7px;height:9.7px;background:#fdfdfd;border-top:1.5px solid #b4b4b4;border-left:1.5px solid #b4b4b4;border-right:1px solid #f4f4f4;border-bottom:1px solid #f4f4f4"></div>
<div style="left:72.5px;top:487.8px;font-size:8.67px;line-height:8.67px;color:#ff1a1a;letter-spacing:-0.16px;-webkit-text-stroke-width:0.16px;">913</div>
<div style="left:-202px;top:487.8px;width:400px;text-align:right;font-size:8.67px;line-height:8.67px;color:#ff1a1a;letter-spacing:-0.16px;-webkit-text-stroke-width:0.16px;">4</div>
<div style="left:201.6px;top:487.8px;font-size:8.67px;line-height:8.67px;color:#ff1a1a;letter-spacing:-0.16px;-webkit-text-stroke-width:0.16px;">belegt</div>
<div style="left:-82.4px;top:487.8px;width:400px;text-align:right;font-size:8.67px;line-height:8.67px;color:#ff1a1a;letter-spacing:-0.16px;-webkit-text-stroke-width:0.16px;">168</div>
<div style="left:-34.2px;top:487.8px;width:400px;text-align:right;font-size:8.67px;line-height:8.67px;color:#ff1a1a;letter-spacing:-0.16px;-webkit-text-stroke-width:0.16px;">25,14</div>
<div style="left:4.5px;top:498.48px;width:365.7px;height:1px;background:#bdbdbd"></div>
<div style="left:37.3px;top:500.88px;width:9.7px;height:9.7px;background:#fdfdfd;border-top:1.5px solid #b4b4b4;border-left:1.5px solid #b4b4b4;border-right:1px solid #f4f4f4;border-bottom:1px solid #f4f4f4"></div>
<div style="left:72.5px;top:502.04px;font-size:8.67px;line-height:8.67px;color:#ff1a1a;letter-spacing:-0.16px;-webkit-text-stroke-width:0.16px;">805</div>
<div style="left:-202px;top:502.04px;width:400px;text-align:right;font-size:8.67px;line-height:8.67px;color:#ff1a1a;letter-spacing:-0.16px;-webkit-text-stroke-width:0.16px;">6</div>
<div style="left:201.6px;top:502.04px;font-size:8.67px;line-height:8.67px;color:#ff1a1a;letter-spacing:-0.16px;-webkit-text-stroke-width:0.16px;">belegt</div>
<div style="left:-82.4px;top:502.04px;width:400px;text-align:right;font-size:8.67px;line-height:8.67px;color:#ff1a1a;letter-spacing:-0.16px;-webkit-text-stroke-width:0.16px;">175</div>
<div style="left:-34.2px;top:502.04px;width:400px;text-align:right;font-size:8.67px;line-height:8.67px;color:#ff1a1a;letter-spacing:-0.16px;-webkit-text-stroke-width:0.16px;">37,46</div>
<div style="left:4.5px;top:512.72px;width:365.7px;height:1px;background:#bdbdbd"></div>
<div style="left:37.3px;top:515.12px;width:9.7px;height:9.7px;background:#fdfdfd;border-top:1.5px solid #b4b4b4;border-left:1.5px solid #b4b4b4;border-right:1px solid #f4f4f4;border-bottom:1px solid #f4f4f4"></div>
<div style="left:72.5px;top:516.28px;font-size:8.67px;line-height:8.67px;color:#ff1a1a;letter-spacing:-0.16px;-webkit-text-stroke-width:0.16px;">804</div>
<div style="left:-202px;top:516.28px;width:400px;text-align:right;font-size:8.67px;line-height:8.67px;color:#ff1a1a;letter-spacing:-0.16px;-webkit-text-stroke-width:0.16px;">6</div>
<div style="left:201.6px;top:516.28px;font-size:8.67px;line-height:8.67px;color:#ff1a1a;letter-spacing:-0.16px;-webkit-text-stroke-width:0.16px;">belegt</div>
<div style="left:-82.4px;top:516.28px;width:400px;text-align:right;font-size:8.67px;line-height:8.67px;color:#ff1a1a;letter-spacing:-0.16px;-webkit-text-stroke-width:0.16px;">161</div>
<div style="left:-34.2px;top:516.28px;width:400px;text-align:right;font-size:8.67px;line-height:8.67px;color:#ff1a1a;letter-spacing:-0.16px;-webkit-text-stroke-width:0.16px;">32,17</div>
<div style="left:4.5px;top:526.96px;width:365.7px;height:1px;background:#bdbdbd"></div>
<div style="left:37.3px;top:529.36px;width:9.7px;height:9.7px;background:#fdfdfd;border-top:1.5px solid #b4b4b4;border-left:1.5px solid #b4b4b4;border-right:1px solid #f4f4f4;border-bottom:1px solid #f4f4f4"></div>
<div style="left:72.5px;top:530.52px;font-size:8.67px;line-height:8.67px;color:#ff1a1a;letter-spacing:-0.16px;-webkit-text-stroke-width:0.16px;">803</div>
<div style="left:-202px;top:530.52px;width:400px;text-align:right;font-size:8.67px;line-height:8.67px;color:#ff1a1a;letter-spacing:-0.16px;-webkit-text-stroke-width:0.16px;">6</div>
<div style="left:201.6px;top:530.52px;font-size:8.67px;line-height:8.67px;color:#ff1a1a;letter-spacing:-0.16px;-webkit-text-stroke-width:0.16px;">belegt</div>
<div style="left:-82.4px;top:530.52px;width:400px;text-align:right;font-size:8.67px;line-height:8.67px;color:#ff1a1a;letter-spacing:-0.16px;-webkit-text-stroke-width:0.16px;">175</div>
<div style="left:-34.2px;top:530.52px;width:400px;text-align:right;font-size:8.67px;line-height:8.67px;color:#ff1a1a;letter-spacing:-0.16px;-webkit-text-stroke-width:0.16px;">30,81</div>
<div style="left:4.5px;top:541.2px;width:365.7px;height:1px;background:#bdbdbd"></div>
<div style="left:37.3px;top:543.6px;width:9.7px;height:9.7px;background:#fdfdfd;border-top:1.5px solid #b4b4b4;border-left:1.5px solid #b4b4b4;border-right:1px solid #f4f4f4;border-bottom:1px solid #f4f4f4"></div>
<div style="left:72.5px;top:544.76px;font-size:8.67px;line-height:8.67px;color:#ff1a1a;letter-spacing:-0.16px;-webkit-text-stroke-width:0.16px;">802</div>
<div style="left:-202px;top:544.76px;width:400px;text-align:right;font-size:8.67px;line-height:8.67px;color:#ff1a1a;letter-spacing:-0.16px;-webkit-text-stroke-width:0.16px;">6</div>
<div style="left:201.6px;top:544.76px;font-size:8.67px;line-height:8.67px;color:#ff1a1a;letter-spacing:-0.16px;-webkit-text-stroke-width:0.16px;">belegt</div>
<div style="left:-82.4px;top:544.76px;width:400px;text-align:right;font-size:8.67px;line-height:8.67px;color:#ff1a1a;letter-spacing:-0.16px;-webkit-text-stroke-width:0.16px;">175</div>
<div style="left:-34.2px;top:544.76px;width:400px;text-align:right;font-size:8.67px;line-height:8.67px;color:#ff1a1a;letter-spacing:-0.16px;-webkit-text-stroke-width:0.16px;">30,31</div>
<div style="left:4.5px;top:555.44px;width:365.7px;height:1px;background:#bdbdbd"></div>
<div style="left:37.3px;top:557.84px;width:9.7px;height:9.7px;background:#fdfdfd;border-top:1.5px solid #b4b4b4;border-left:1.5px solid #b4b4b4;border-right:1px solid #f4f4f4;border-bottom:1px solid #f4f4f4"></div>
<div style="left:72.5px;top:559px;font-size:8.67px;line-height:8.67px;color:#ff1a1a;letter-spacing:-0.16px;-webkit-text-stroke-width:0.16px;">801</div>
<div style="left:-202px;top:559px;width:400px;text-align:right;font-size:8.67px;line-height:8.67px;color:#ff1a1a;letter-spacing:-0.16px;-webkit-text-stroke-width:0.16px;">6</div>
<div style="left:201.6px;top:559px;font-size:8.67px;line-height:8.67px;color:#ff1a1a;letter-spacing:-0.16px;-webkit-text-stroke-width:0.16px;">belegt</div>
<div style="left:-82.4px;top:559px;width:400px;text-align:right;font-size:8.67px;line-height:8.67px;color:#ff1a1a;letter-spacing:-0.16px;-webkit-text-stroke-width:0.16px;">167</div>
<div style="left:-34.2px;top:559px;width:400px;text-align:right;font-size:8.67px;line-height:8.67px;color:#ff1a1a;letter-spacing:-0.16px;-webkit-text-stroke-width:0.16px;">28,28</div>
<div style="left:13.6px;top:569.68px;width:185.6px;height:14.24px;background:#0078d7"></div>
<div style="left:259.6px;top:569.68px;width:108.4px;height:14.24px;background:#0078d7"></div>
<svg style="position:absolute;left:8.22px;top:573.43px" width="3.75" height="7.5" viewBox="0 0 3.75 7.5"><path d="M0 0 L3.75 3.75 L0 7.5 Z" fill="#000"/></svg>
<div style="left:4.5px;top:569.68px;width:365.7px;height:1px;background:#bdbdbd"></div>
<div style="left:37.3px;top:572.08px;width:9.7px;height:9.7px;background:#fff;border:1px solid #fff"></div>
<div style="left:72.5px;top:573.24px;font-size:8.67px;line-height:8.67px;color:#fff;letter-spacing:-0.16px;-webkit-text-stroke-width:0.16px;">912</div>
<div style="left:-202px;top:573.24px;width:400px;text-align:right;font-size:8.67px;line-height:8.67px;color:#fff;letter-spacing:-0.16px;-webkit-text-stroke-width:0.16px;">4</div>
<div style="left:201.6px;top:573.24px;font-size:8.67px;line-height:8.67px;color:#000;letter-spacing:-0.16px;-webkit-text-stroke-width:0.16px;">belegt</div>
<div style="left:-82.4px;top:573.24px;width:400px;text-align:right;font-size:8.67px;line-height:8.67px;color:#fff;letter-spacing:-0.16px;-webkit-text-stroke-width:0.16px;">94</div>
<div style="left:-34.2px;top:573.24px;width:400px;text-align:right;font-size:8.67px;line-height:8.67px;color:#fff;letter-spacing:-0.16px;-webkit-text-stroke-width:0.16px;">31,74</div>
<div style="left:4.5px;top:583.92px;width:365.7px;height:1px;background:#bdbdbd"></div>
<div style="left:37.3px;top:586.32px;width:9.7px;height:9.7px;background:#fdfdfd;border-top:1.5px solid #b4b4b4;border-left:1.5px solid #b4b4b4;border-right:1px solid #f4f4f4;border-bottom:1px solid #f4f4f4"></div>
<div style="left:72.5px;top:587.48px;font-size:8.67px;line-height:8.67px;color:#000;letter-spacing:-0.16px;-webkit-text-stroke-width:0.16px;">911</div>
<div style="left:-202px;top:587.48px;width:400px;text-align:right;font-size:8.67px;line-height:8.67px;color:#000;letter-spacing:-0.16px;-webkit-text-stroke-width:0.16px;">4</div>
<div style="left:201.6px;top:587.48px;font-size:8.67px;line-height:8.67px;color:#000;letter-spacing:-0.16px;-webkit-text-stroke-width:0.16px;">belegt</div>
<div style="left:-82.4px;top:587.48px;width:400px;text-align:right;font-size:8.67px;line-height:8.67px;color:#000;letter-spacing:-0.16px;-webkit-text-stroke-width:0.16px;">94</div>
<div style="left:-34.2px;top:587.48px;width:400px;text-align:right;font-size:8.67px;line-height:8.67px;color:#000;letter-spacing:-0.16px;-webkit-text-stroke-width:0.16px;">29,68</div>
<div style="left:4.5px;top:598.16px;width:365.7px;height:1px;background:#bdbdbd"></div>
<div style="left:37.3px;top:600.56px;width:9.7px;height:9.7px;background:#fdfdfd;border-top:1.5px solid #b4b4b4;border-left:1.5px solid #b4b4b4;border-right:1px solid #f4f4f4;border-bottom:1px solid #f4f4f4"></div>
<div style="left:72.5px;top:601.72px;font-size:8.67px;line-height:8.67px;color:#000;letter-spacing:-0.16px;-webkit-text-stroke-width:0.16px;">910</div>
<div style="left:-202px;top:601.72px;width:400px;text-align:right;font-size:8.67px;line-height:8.67px;color:#000;letter-spacing:-0.16px;-webkit-text-stroke-width:0.16px;">4</div>
<div style="left:201.6px;top:601.72px;font-size:8.67px;line-height:8.67px;color:#000;letter-spacing:-0.16px;-webkit-text-stroke-width:0.16px;">belegt</div>
<div style="left:-82.4px;top:601.72px;width:400px;text-align:right;font-size:8.67px;line-height:8.67px;color:#000;letter-spacing:-0.16px;-webkit-text-stroke-width:0.16px;">78</div>
<div style="left:-34.2px;top:601.72px;width:400px;text-align:right;font-size:8.67px;line-height:8.67px;color:#000;letter-spacing:-0.16px;-webkit-text-stroke-width:0.16px;">36,52</div>
<div style="left:4.5px;top:612.4px;width:365.7px;height:1px;background:#bdbdbd"></div>
<div style="left:37.3px;top:614.8px;width:9.7px;height:9.7px;background:#fdfdfd;border-top:1.5px solid #b4b4b4;border-left:1.5px solid #b4b4b4;border-right:1px solid #f4f4f4;border-bottom:1px solid #f4f4f4"></div>
<div style="left:72.5px;top:615.96px;font-size:8.67px;line-height:8.67px;color:#000;letter-spacing:-0.16px;-webkit-text-stroke-width:0.16px;">909</div>
<div style="left:-202px;top:615.96px;width:400px;text-align:right;font-size:8.67px;line-height:8.67px;color:#000;letter-spacing:-0.16px;-webkit-text-stroke-width:0.16px;">4</div>
<div style="left:201.6px;top:615.96px;font-size:8.67px;line-height:8.67px;color:#000;letter-spacing:-0.16px;-webkit-text-stroke-width:0.16px;">belegt</div>
<div style="left:-82.4px;top:615.96px;width:400px;text-align:right;font-size:8.67px;line-height:8.67px;color:#000;letter-spacing:-0.16px;-webkit-text-stroke-width:0.16px;">87</div>
<div style="left:-34.2px;top:615.96px;width:400px;text-align:right;font-size:8.67px;line-height:8.67px;color:#000;letter-spacing:-0.16px;-webkit-text-stroke-width:0.16px;">32,98</div>
<div style="left:4.5px;top:626.64px;width:365.7px;height:1px;background:#bdbdbd"></div>
<div style="left:37.3px;top:629.04px;width:9.7px;height:9.7px;background:#fdfdfd;border-top:1.5px solid #b4b4b4;border-left:1.5px solid #b4b4b4;border-right:1px solid #f4f4f4;border-bottom:1px solid #f4f4f4"></div>
<div style="left:72.5px;top:630.2px;font-size:8.67px;line-height:8.67px;color:#000;letter-spacing:-0.16px;-webkit-text-stroke-width:0.16px;">908</div>
<div style="left:-202px;top:630.2px;width:400px;text-align:right;font-size:8.67px;line-height:8.67px;color:#000;letter-spacing:-0.16px;-webkit-text-stroke-width:0.16px;">4</div>
<div style="left:201.6px;top:630.2px;font-size:8.67px;line-height:8.67px;color:#000;letter-spacing:-0.16px;-webkit-text-stroke-width:0.16px;">belegt</div>
<div style="left:-82.4px;top:630.2px;width:400px;text-align:right;font-size:8.67px;line-height:8.67px;color:#000;letter-spacing:-0.16px;-webkit-text-stroke-width:0.16px;">58</div>
<div style="left:-34.2px;top:630.2px;width:400px;text-align:right;font-size:8.67px;line-height:8.67px;color:#000;letter-spacing:-0.16px;-webkit-text-stroke-width:0.16px;">31,83</div>
<div style="left:4.5px;top:640.88px;width:365.7px;height:1px;background:#bdbdbd"></div>
<div style="left:37.3px;top:643.28px;width:9.7px;height:9.7px;background:#fdfdfd;border-top:1.5px solid #b4b4b4;border-left:1.5px solid #b4b4b4;border-right:1px solid #f4f4f4;border-bottom:1px solid #f4f4f4"></div>
<div style="left:72.5px;top:644.44px;font-size:8.67px;line-height:8.67px;color:#000;letter-spacing:-0.16px;-webkit-text-stroke-width:0.16px;">907</div>
<div style="left:-202px;top:644.44px;width:400px;text-align:right;font-size:8.67px;line-height:8.67px;color:#000;letter-spacing:-0.16px;-webkit-text-stroke-width:0.16px;">4</div>
<div style="left:201.6px;top:644.44px;font-size:8.67px;line-height:8.67px;color:#000;letter-spacing:-0.16px;-webkit-text-stroke-width:0.16px;">belegt</div>
<div style="left:-82.4px;top:644.44px;width:400px;text-align:right;font-size:8.67px;line-height:8.67px;color:#000;letter-spacing:-0.16px;-webkit-text-stroke-width:0.16px;">87</div>
<div style="left:-34.2px;top:644.44px;width:400px;text-align:right;font-size:8.67px;line-height:8.67px;color:#000;letter-spacing:-0.16px;-webkit-text-stroke-width:0.16px;">32,57</div>
<div style="left:4.5px;top:655.12px;width:365.7px;height:1px;background:#bdbdbd"></div>
<div style="left:37.3px;top:657.52px;width:9.7px;height:9.7px;background:#fdfdfd;border-top:1.5px solid #b4b4b4;border-left:1.5px solid #b4b4b4;border-right:1px solid #f4f4f4;border-bottom:1px solid #f4f4f4"></div>
<div style="left:72.5px;top:658.68px;font-size:8.67px;line-height:8.67px;color:#ff1a1a;letter-spacing:-0.16px;-webkit-text-stroke-width:0.16px;">906</div>
<div style="left:-202px;top:658.68px;width:400px;text-align:right;font-size:8.67px;line-height:8.67px;color:#ff1a1a;letter-spacing:-0.16px;-webkit-text-stroke-width:0.16px;">4</div>
<div style="left:201.6px;top:658.68px;font-size:8.67px;line-height:8.67px;color:#ff1a1a;letter-spacing:-0.16px;-webkit-text-stroke-width:0.16px;">belegt</div>
<div style="left:-82.4px;top:658.68px;width:400px;text-align:right;font-size:8.67px;line-height:8.67px;color:#ff1a1a;letter-spacing:-0.16px;-webkit-text-stroke-width:0.16px;">126</div>
<div style="left:-34.2px;top:658.68px;width:400px;text-align:right;font-size:8.67px;line-height:8.67px;color:#ff1a1a;letter-spacing:-0.16px;-webkit-text-stroke-width:0.16px;">32,18</div>
<div style="left:4.5px;top:669.36px;width:365.7px;height:1px;background:#bdbdbd"></div>
<div style="left:37.3px;top:671.76px;width:9.7px;height:9.7px;background:#fdfdfd;border-top:1.5px solid #b4b4b4;border-left:1.5px solid #b4b4b4;border-right:1px solid #f4f4f4;border-bottom:1px solid #f4f4f4"></div>
<div style="left:72.5px;top:672.92px;font-size:8.67px;line-height:8.67px;color:#ff1a1a;letter-spacing:-0.16px;-webkit-text-stroke-width:0.16px;">905</div>
<div style="left:-202px;top:672.92px;width:400px;text-align:right;font-size:8.67px;line-height:8.67px;color:#ff1a1a;letter-spacing:-0.16px;-webkit-text-stroke-width:0.16px;">4</div>
<div style="left:201.6px;top:672.92px;font-size:8.67px;line-height:8.67px;color:#ff1a1a;letter-spacing:-0.16px;-webkit-text-stroke-width:0.16px;">belegt</div>
<div style="left:-82.4px;top:672.92px;width:400px;text-align:right;font-size:8.67px;line-height:8.67px;color:#ff1a1a;letter-spacing:-0.16px;-webkit-text-stroke-width:0.16px;">154</div>
<div style="left:-34.2px;top:672.92px;width:400px;text-align:right;font-size:8.67px;line-height:8.67px;color:#ff1a1a;letter-spacing:-0.16px;-webkit-text-stroke-width:0.16px;">30,63</div>
<div style="left:4.5px;top:683.6px;width:365.7px;height:1px;background:#bdbdbd"></div>
<div style="left:37.3px;top:686px;width:9.7px;height:9.7px;background:#fdfdfd;border-top:1.5px solid #b4b4b4;border-left:1.5px solid #b4b4b4;border-right:1px solid #f4f4f4;border-bottom:1px solid #f4f4f4"></div>
<div style="left:72.5px;top:687.16px;font-size:8.67px;line-height:8.67px;color:#ff1a1a;letter-spacing:-0.16px;-webkit-text-stroke-width:0.16px;">904</div>
<div style="left:-202px;top:687.16px;width:400px;text-align:right;font-size:8.67px;line-height:8.67px;color:#ff1a1a;letter-spacing:-0.16px;-webkit-text-stroke-width:0.16px;">4</div>
<div style="left:201.6px;top:687.16px;font-size:8.67px;line-height:8.67px;color:#ff1a1a;letter-spacing:-0.16px;-webkit-text-stroke-width:0.16px;">belegt</div>
<div style="left:-82.4px;top:687.16px;width:400px;text-align:right;font-size:8.67px;line-height:8.67px;color:#ff1a1a;letter-spacing:-0.16px;-webkit-text-stroke-width:0.16px;">154</div>
<div style="left:-34.2px;top:687.16px;width:400px;text-align:right;font-size:8.67px;line-height:8.67px;color:#ff1a1a;letter-spacing:-0.16px;-webkit-text-stroke-width:0.16px;">27,62</div>
<div style="left:4.5px;top:697.84px;width:365.7px;height:1px;background:#bdbdbd"></div>
<div style="left:37.3px;top:700.24px;width:9.7px;height:9.7px;background:#fdfdfd;border-top:1.5px solid #b4b4b4;border-left:1.5px solid #b4b4b4;border-right:1px solid #f4f4f4;border-bottom:1px solid #f4f4f4"></div>
<div style="left:72.5px;top:701.4px;font-size:8.67px;line-height:8.67px;color:#ff1a1a;letter-spacing:-0.16px;-webkit-text-stroke-width:0.16px;">903</div>
<div style="left:-202px;top:701.4px;width:400px;text-align:right;font-size:8.67px;line-height:8.67px;color:#ff1a1a;letter-spacing:-0.16px;-webkit-text-stroke-width:0.16px;">4</div>
<div style="left:201.6px;top:701.4px;font-size:8.67px;line-height:8.67px;color:#ff1a1a;letter-spacing:-0.16px;-webkit-text-stroke-width:0.16px;">belegt</div>
<div style="left:-82.4px;top:701.4px;width:400px;text-align:right;font-size:8.67px;line-height:8.67px;color:#ff1a1a;letter-spacing:-0.16px;-webkit-text-stroke-width:0.16px;">154</div>
<div style="left:-34.2px;top:701.4px;width:400px;text-align:right;font-size:8.67px;line-height:8.67px;color:#ff1a1a;letter-spacing:-0.16px;-webkit-text-stroke-width:0.16px;">29,27</div>
<div style="left:4.5px;top:712.08px;width:365.7px;height:1px;background:#bdbdbd"></div>
<div style="left:37.3px;top:714.48px;width:9.7px;height:9.7px;background:#fdfdfd;border-top:1.5px solid #b4b4b4;border-left:1.5px solid #b4b4b4;border-right:1px solid #f4f4f4;border-bottom:1px solid #f4f4f4"></div>
<div style="left:72.5px;top:715.64px;font-size:8.67px;line-height:8.67px;color:#ff1a1a;letter-spacing:-0.16px;-webkit-text-stroke-width:0.16px;">902</div>
<div style="left:-202px;top:715.64px;width:400px;text-align:right;font-size:8.67px;line-height:8.67px;color:#ff1a1a;letter-spacing:-0.16px;-webkit-text-stroke-width:0.16px;">4</div>
<div style="left:201.6px;top:715.64px;font-size:8.67px;line-height:8.67px;color:#ff1a1a;letter-spacing:-0.16px;-webkit-text-stroke-width:0.16px;">belegt</div>
<div style="left:-82.4px;top:715.64px;width:400px;text-align:right;font-size:8.67px;line-height:8.67px;color:#ff1a1a;letter-spacing:-0.16px;-webkit-text-stroke-width:0.16px;">161</div>
<div style="left:-34.2px;top:715.64px;width:400px;text-align:right;font-size:8.67px;line-height:8.67px;color:#ff1a1a;letter-spacing:-0.16px;-webkit-text-stroke-width:0.16px;">31,83</div>
<div style="left:4.5px;top:726.32px;width:365.7px;height:1px;background:#bdbdbd"></div>
<div style="left:37.3px;top:728.72px;width:9.7px;height:9.7px;background:#fdfdfd;border-top:1.5px solid #b4b4b4;border-left:1.5px solid #b4b4b4;border-right:1px solid #f4f4f4;border-bottom:1px solid #f4f4f4"></div>
<div style="left:72.5px;top:729.88px;font-size:8.67px;line-height:8.67px;color:#ff1a1a;letter-spacing:-0.16px;-webkit-text-stroke-width:0.16px;">901</div>
<div style="left:-202px;top:729.88px;width:400px;text-align:right;font-size:8.67px;line-height:8.67px;color:#ff1a1a;letter-spacing:-0.16px;-webkit-text-stroke-width:0.16px;">4</div>
<div style="left:201.6px;top:729.88px;font-size:8.67px;line-height:8.67px;color:#ff1a1a;letter-spacing:-0.16px;-webkit-text-stroke-width:0.16px;">belegt</div>
<div style="left:-82.4px;top:729.88px;width:400px;text-align:right;font-size:8.67px;line-height:8.67px;color:#ff1a1a;letter-spacing:-0.16px;-webkit-text-stroke-width:0.16px;">161</div>
<div style="left:-34.2px;top:729.88px;width:400px;text-align:right;font-size:8.67px;line-height:8.67px;color:#ff1a1a;letter-spacing:-0.16px;-webkit-text-stroke-width:0.16px;">34,35</div>
<div style="left:4.5px;top:740.56px;width:365.7px;height:1px;background:#bdbdbd"></div>
<div style="left:37.3px;top:742.96px;width:9.7px;height:9.7px;background:#fdfdfd;border-top:1.5px solid #b4b4b4;border-left:1.5px solid #b4b4b4;border-right:1px solid #f4f4f4;border-bottom:1px solid #f4f4f4"></div>
<div style="left:72.5px;top:744.12px;font-size:8.67px;line-height:8.67px;color:#000;letter-spacing:-0.16px;-webkit-text-stroke-width:0.16px;">821</div>
<div style="left:-202px;top:744.12px;width:400px;text-align:right;font-size:8.67px;line-height:8.67px;color:#000;letter-spacing:-0.16px;-webkit-text-stroke-width:0.16px;">5</div>
<div style="left:201.6px;top:744.12px;font-size:8.67px;line-height:8.67px;color:#000;letter-spacing:-0.16px;-webkit-text-stroke-width:0.16px;">belegt</div>
<div style="left:-82.4px;top:744.12px;width:400px;text-align:right;font-size:8.67px;line-height:8.67px;color:#000;letter-spacing:-0.16px;-webkit-text-stroke-width:0.16px;">109</div>
<div style="left:-34.2px;top:744.12px;width:400px;text-align:right;font-size:8.67px;line-height:8.67px;color:#000;letter-spacing:-0.16px;-webkit-text-stroke-width:0.16px;">32,98</div>
<div style="left:4.5px;top:754.8px;width:365.7px;height:1px;background:#bdbdbd"></div>
<div style="left:37.3px;top:757.2px;width:9.7px;height:9.7px;background:#fdfdfd;border-top:1.5px solid #b4b4b4;border-left:1.5px solid #b4b4b4;border-right:1px solid #f4f4f4;border-bottom:1px solid #f4f4f4"></div>
<div style="left:72.5px;top:758.36px;font-size:8.67px;line-height:8.67px;color:#ff1a1a;letter-spacing:-0.16px;-webkit-text-stroke-width:0.16px;">820</div>
<div style="left:-202px;top:758.36px;width:400px;text-align:right;font-size:8.67px;line-height:8.67px;color:#ff1a1a;letter-spacing:-0.16px;-webkit-text-stroke-width:0.16px;">5</div>
<div style="left:201.6px;top:758.36px;font-size:8.67px;line-height:8.67px;color:#ff1a1a;letter-spacing:-0.16px;-webkit-text-stroke-width:0.16px;">leer</div>
<div style="left:-82.4px;top:758.36px;width:400px;text-align:right;font-size:8.67px;line-height:8.67px;color:#ff1a1a;letter-spacing:-0.16px;-webkit-text-stroke-width:0.16px;">73</div>
<div style="left:-34.2px;top:758.36px;width:400px;text-align:right;font-size:8.67px;line-height:8.67px;color:#ff1a1a;letter-spacing:-0.16px;-webkit-text-stroke-width:0.16px;">32,24</div>
<div style="left:4.5px;top:769.04px;width:365.7px;height:1px;background:#bdbdbd"></div>
<div style="left:13px;top:185.2px;width:1px;height:583.84px;background:#bdbdbd"></div>
<div style="left:70px;top:185.2px;width:1px;height:583.84px;background:#bdbdbd"></div>
<div style="left:199px;top:185.2px;width:1px;height:583.84px;background:#bdbdbd"></div>
<div style="left:259px;top:185.2px;width:1px;height:583.84px;background:#bdbdbd"></div>
<div style="left:319px;top:185.2px;width:1px;height:583.84px;background:#bdbdbd"></div>
<div style="left:367.6px;top:185.2px;width:1px;height:583.84px;background:#bdbdbd"></div>
<div style="left:153px;top:128.6px;width:2.2px;height:640.44px;background:#111"></div>
<div style="left:4.5px;top:769.54px;width:365.8px;height:16.26px;background:#f0f0f0"></div>
<div style="left:15.8px;top:770.5px;width:54.5px;height:15.3px;background:#efefef;border-top:1px solid #c0c0c0;border-left:1px solid #c0c0c0;border-right:1px solid #fafafa"></div>
<div style="left:71.7px;top:770.5px;width:80.5px;height:15.3px;background:#efefef;border-top:1px solid #c0c0c0;border-left:1px solid #c0c0c0;border-right:1px solid #fafafa"></div>
<div style="left:-332px;top:774.16px;width:400px;text-align:right;font-size:8.67px;line-height:8.67px;color:#000;letter-spacing:-0.16px;-webkit-text-stroke-width:0.16px;">0</div>
<div style="left:-250px;top:774.16px;width:400px;text-align:right;font-size:8.67px;line-height:8.67px;color:#000;letter-spacing:-0.16px;-webkit-text-stroke-width:0.16px;">115</div>
<div style="left:4.5px;top:785.8px;width:365.8px;height:34.7px;background:#a0a0a0"></div>
<div style="left:14.5px;top:797.3px;width:237.5px;height:14.5px;background:#fdfde6;border-top:1px solid #f4f4f4;border-left:1px solid #f4f4f4"></div>
<div style="left:16.3px;top:800.66px;font-size:8.67px;line-height:8.67px;color:#505050;letter-spacing:-0.16px;-webkit-text-stroke-width:0.16px;">Suchtext hier eingeben...</div>
<div style="left:251.8px;top:797.2px;width:13.4px;height:14.4px;background:#f0f0f0;border-top:1px solid #fff;border-left:1px solid #fff;border-right:1px solid #a0a0a0;border-bottom:1px solid #a0a0a0"></div>
<svg style="position:absolute;left:255.5px;top:803px" width="6" height="3" viewBox="0 0 6 3"><path d="M0 0 L6 0 L3 3 Z" fill="#000"/></svg>
<div style="left:268.4px;top:797.2px;width:44.6px;height:14.4px;background:#f0f0f0;border:1px solid #f8f8f8"></div>
<div style="left:-9.3px;top:800.66px;width:600px;text-align:center;font-size:8.67px;line-height:8.67px;color:#000;letter-spacing:-0.16px;-webkit-text-stroke-width:0.16px;">Suchen</div>
<div style="left:316.3px;top:797.2px;width:44.4px;height:14.4px;background:#f0f0f0;border:1px solid #f8f8f8"></div>
<div style="left:38.5px;top:800.66px;width:600px;text-align:center;font-size:8.67px;line-height:8.67px;color:#000;letter-spacing:-0.16px;-webkit-text-stroke-width:0.16px;">Löschen</div>
<div style="left:4.5px;top:820.5px;width:366px;height:13.3px;background:#f6f6f6"></div>
<div style="left:4.7px;top:821px;width:12.5px;height:12.5px;background:#f0f0f0;border-top:1px solid #fff;border-left:1px solid #fff;border-right:1px solid #a0a0a0;border-bottom:1px solid #a0a0a0"></div>
<svg style="position:absolute;left:9.05px;top:823.8px" width="3.5" height="7" viewBox="0 0 3.5 7"><path d="M3.5 0 L0 3.5 L3.5 7 Z" fill="#000"/></svg>
<div style="left:17.3px;top:821px;width:50px;height:12.5px;background:#ececec;border:1px solid #d4d4d4"></div>
<div style="left:358px;top:821px;width:12.5px;height:12.5px;background:#f0f0f0;border-top:1px solid #fff;border-left:1px solid #fff;border-right:1px solid #a0a0a0;border-bottom:1px solid #a0a0a0"></div>
<svg style="position:absolute;left:362.55px;top:823.8px" width="3.5" height="7" viewBox="0 0 3.5 7"><path d="M0 0 L3.5 3.5 L0 7 Z" fill="#000"/></svg>
<div style="left:370.3px;top:820.5px;width:14px;height:13.3px;background:#f0f0f0"></div>
<div style="left:3.2px;top:834.5px;width:382.5px;height:6.3px;background:linear-gradient(#3a6ac8,#1c4aa8)"></div>
<div style="left:181px;top:836.5px;width:1.6px;height:1.6px;background:#dfe8f8"></div>
<div style="left:184px;top:836.5px;width:1.6px;height:1.6px;background:#dfe8f8"></div>
<div style="left:187px;top:836.5px;width:1.6px;height:1.6px;background:#dfe8f8"></div>
<div style="left:190px;top:836.5px;width:1.6px;height:1.6px;background:#dfe8f8"></div>
<div style="left:193px;top:836.5px;width:1.6px;height:1.6px;background:#dfe8f8"></div>
<div style="left:196px;top:836.5px;width:1.6px;height:1.6px;background:#dfe8f8"></div>
<div style="left:199px;top:836.5px;width:1.6px;height:1.6px;background:#dfe8f8"></div>
<div style="left:202px;top:836.5px;width:1.6px;height:1.6px;background:#dfe8f8"></div>
<div style="left:205px;top:836.5px;width:1.6px;height:1.6px;background:#dfe8f8"></div>
<div style="left:3.2px;top:840.8px;width:382.5px;height:22.5px;background:linear-gradient(#d2e4f9,#92b5e6);border-left:1px solid #4a68b8;border-right:1px solid #4a68b8;border-bottom:1px solid #2d5bb8"></div>
<div style="left:304px;top:841px;width:22px;height:21.8px;background:linear-gradient(#ffd47e,#f4a024)"></div>
<svg style="left:0;top:0;width:0;height:0"><defs><radialGradient id="oct" cx="45%" cy="40%" r="65%"><stop offset="0" stop-color="#b4b4b4"/><stop offset="0.6" stop-color="#8c8c8c"/><stop offset="1" stop-color="#5c5c5c"/></radialGradient></defs></svg>
<svg style="left:194.4px;top:844px" width="16" height="16" viewBox="0 0 16 16"><path d="M5 0.5 L11 0.5 L15.5 5 L15.5 11 L11 15.5 L5 15.5 L0.5 11 L0.5 5 Z" fill="url(#oct)" stroke="#555" stroke-width="0.7"/><circle cx="6.3" cy="3.8" r="1.2" fill="#f4f4f4"/><path d="M5 6 L7.5 6 L7 8 L5.5 8 Z" fill="#f4f4f4"/><ellipse cx="10.8" cy="6.8" rx="1.5" ry="2.6" fill="#f4f4f4"/><ellipse cx="6.2" cy="11.3" rx="3.4" ry="1.7" transform="rotate(25 6.2 11.3)" fill="#f4f4f4"/><ellipse cx="11" cy="11.3" rx="3" ry="1.6" transform="rotate(-30 11 11.3)" fill="#f4f4f4"/></svg>
<svg style="left:216.9px;top:844px" width="16" height="16" viewBox="0 0 16 16"><path d="M5 0.5 L11 0.5 L15.5 5 L15.5 11 L11 15.5 L5 15.5 L0.5 11 L0.5 5 Z" fill="url(#oct)" stroke="#555" stroke-width="0.7"/><path d="M3 12.5 L8.5 5 L13 5" stroke="#303030" stroke-width="1.1" fill="none"/><path d="M3 12.5 L10 12.5" stroke="#404040" stroke-width="1"/><path d="M4.5 3.8 L12.8 11.8" stroke="#f8f8f8" stroke-width="1.8"/></svg>
<svg style="left:239.4px;top:844px" width="16" height="16" viewBox="0 0 16 16"><path d="M5 0.5 L11 0.5 L15.5 5 L15.5 11 L11 15.5 L5 15.5 L0.5 11 L0.5 5 Z" fill="url(#oct)" stroke="#555" stroke-width="0.7"/><rect x="5.6" y="2.6" width="4.8" height="10.8" fill="#f4f4f4"/><rect x="6.6" y="3.6" width="2.8" height="1.2" fill="#bdbdbd"/><rect x="6.6" y="11" width="2.8" height="1.4" fill="#9a9a9a"/></svg>
<svg style="left:261.9px;top:844px" width="16" height="16" viewBox="0 0 16 16"><path d="M5 0.5 L11 0.5 L15.5 5 L15.5 11 L11 15.5 L5 15.5 L0.5 11 L0.5 5 Z" fill="url(#oct)" stroke="#555" stroke-width="0.7"/><path d="M10.8 3.5 Q6.5 2.5 6.3 8 Q6.5 13.5 10.8 12.5" stroke="#f8f8f8" stroke-width="1.7" fill="none"/><path d="M5 7 L8.5 7 M5 9 L8.5 9" stroke="#f8f8f8" stroke-width="0.9"/></svg>
<svg style="left:284.4px;top:844px" width="16" height="16" viewBox="0 0 16 16"><path d="M5 0.5 L11 0.5 L15.5 5 L15.5 11 L11 15.5 L5 15.5 L0.5 11 L0.5 5 Z" fill="url(#oct)" stroke="#555" stroke-width="0.7"/><path d="M3 13 Q3.5 6 12 3 Q9 5 6.5 10 Z" fill="#111"/><path d="M4 13.5 Q8 13 13 7 Q13 4.5 12.5 3.5 Q11 9 4 13.5 Z" fill="#f6f6f6"/></svg>
<svg style="left:306.9px;top:844px" width="16" height="16" viewBox="0 0 16 16"><path d="M5 0.5 L11 0.5 L15.5 5 L15.5 11 L11 15.5 L5 15.5 L0.5 11 L0.5 5 Z" fill="url(#oct)" stroke="#555" stroke-width="0.7"/><path d="M3 6.5 Q4 4.3 8 4.4 Q11.5 4.3 12.6 6 L13.6 6.2 L13.4 8 Q12.8 9.6 11.8 10 L11.8 12 L10.5 12 L10.3 10.4 L6.3 10.4 L6.1 12 L4.8 12 L4.6 10 Q2.6 8.8 3 6.5 Z" fill="#f8f8f8"/></svg>
<svg style="left:329.6px;top:844px" width="16" height="16" viewBox="0 0 16 16"><path d="M5 0.5 L11 0.5 L15.5 5 L15.5 11 L11 15.5 L5 15.5 L0.5 11 L0.5 5 Z" fill="url(#oct)" stroke="#555" stroke-width="0.7"/><path d="M4.2 13 L4.2 4.5 Q4.2 3 5.7 3 Q7.2 3 7.2 4.5 L7.2 11.5 Q7.2 13 8.7 13 Q10.2 13 10.2 11.5 L10.2 4.5 Q10.2 3 11.7 3 Q13 3 13 4.5 L13 12" stroke="#f0f0f0" stroke-width="1.1" fill="none"/></svg>
<svg style="left:352.1px;top:844px" width="16" height="16" viewBox="0 0 16 16"><path d="M5 0.5 L11 0.5 L15.5 5 L15.5 11 L11 15.5 L5 15.5 L0.5 11 L0.5 5 Z" fill="url(#oct)" stroke="#555" stroke-width="0.7"/><rect x="3.5" y="4.5" width="9" height="4" fill="#d8d8d8"/><rect x="3" y="7" width="10" height="4" fill="#f0f0f0"/><path d="M5 7 L5 11 M8 7 L8 11" stroke="#bbb" stroke-width="0.6"/><circle cx="12.3" cy="12.3" r="3.4" fill="#2fa52f"/><circle cx="12" cy="11.8" r="2.2" fill="#3cc83c"/><text x="12.3" y="13.8" font-size="4.2" text-anchor="middle" fill="#111" font-family="Liberation Sans" font-weight="bold">30</text></svg>
<svg style="left:374.6px;top:846px" width="7" height="5" viewBox="0 0 7 5"><path d="M0.6 0.6 L2.8 2.5 L0.6 4.4 M3.8 0.6 L6 2.5 L3.8 4.4" stroke="#000" stroke-width="1.1" fill="none"/></svg>
<svg style="position:absolute;left:375.55px;top:854.38px" width="4.5" height="2.25" viewBox="0 0 4.5 2.25"><path d="M0 0 L4.5 0 L2.25 2.25 Z" fill="#000"/></svg>
<div style="left:385.7px;top:78.8px;width:6.5px;height:785px;background:#f0f0f0"></div>
<div style="left:386.8px;top:353px;width:5px;height:236px;background:linear-gradient(90deg,#c8e0f4,#f4faff);border:1px solid #a8c0d8;border-radius:2px"></div>
<svg style="left:388px;top:469.5px" width="4" height="6" viewBox="0 0 4 6"><path d="M0.5 0.5 L3 3 L0.5 5.5" stroke="#000" stroke-width="1.1" fill="none"/></svg>
<div style="left:385.8px;top:59.5px;width:1.2px;height:19px;background:#d4d4d4"></div>
<div style="left:392px;top:59px;width:807px;height:19px;background:#f0f0f0"></div>
<div style="left:392px;top:60.5px;width:807px;height:1px;background:#e6e6e6"></div>
<div style="left:393.2px;top:60.8px;width:82.6px;height:16.5px;background:#d8e6f4"></div>
<svg style="position:absolute;left:396px;top:63px" width="11" height="11" viewBox="0 0 12 12"><path d="M0.6 1.4 L4.1 5.1 M5.2 6.3 L8.4 9.8 M0.5 9.8 L4.5 5.5 M3.4 9.6 L10.6 1.2" stroke="#2f9d2f" stroke-width="1.25" fill="none" stroke-linecap="round"/><circle cx="7" cy="2.4" r="1" fill="#2f9d2f"/><circle cx="10.6" cy="1.2" r="1.3" fill="#2f9d2f"/></svg>
<div style="left:412.7px;top:65.71px;font-size:8.73px;line-height:8.73px;color:#000;letter-spacing:-0.16px;-webkit-text-stroke-width:0.16px;">Arbeitsbuch</div>
<svg style="position:absolute;left:462.5px;top:64.5px" width="9" height="9" viewBox="0 0 10 10"><path d="M1.5 1.5 L8.5 8.5 M8.5 1.5 L1.5 8.5" stroke="#111" stroke-width="2.6" stroke-linecap="round"/></svg>
<div style="left:476px;top:62.5px;width:96px;height:14.8px;background:#fff;border-left:1px solid #c8c8c8;border-right:1.5px solid #606060"></div>
<svg style="position:absolute;left:480px;top:63px" width="11" height="11" viewBox="0 0 12 12"><path d="M0.6 1.4 L4.1 5.1 M5.2 6.3 L8.4 9.8 M0.5 9.8 L4.5 5.5 M3.4 9.6 L10.6 1.2" stroke="#2f9d2f" stroke-width="1.25" fill="none" stroke-linecap="round"/><circle cx="7" cy="2.4" r="1" fill="#2f9d2f"/><circle cx="10.6" cy="1.2" r="1.3" fill="#2f9d2f"/></svg>
<div style="left:494.7px;top:65.82px;font-size:8.6px;line-height:8.6px;color:#000;letter-spacing:-0.16px;-webkit-text-stroke-width:0.16px;">Tierstammdaten</div>
<svg style="position:absolute;left:560px;top:64.5px" width="9" height="9" viewBox="0 0 10 10"><path d="M1.5 1.5 L8.5 8.5 M8.5 1.5 L1.5 8.5" stroke="#111" stroke-width="2.6" stroke-linecap="round"/></svg>
<div style="left:392px;top:78px;width:807px;height:1.3px;background:#b8b8b8"></div>
<div style="left:392px;top:79px;width:807px;height:798.5px;background:#f0f0f0;border-left:1px solid #c8c8c8"></div>
<div style="left:393px;top:79.2px;width:804px;height:18.3px;background:#f0f0f0;border-left:1px solid #fff;border-top:1px solid #f8f8f8"></div>
<div style="left:393px;top:97.3px;width:804px;height:1px;background:#fff"></div>
<div style="left:651.7px;top:83.44px;font-size:9.52px;line-height:9.52px;color:#0000f0;letter-spacing:-0.18px;-webkit-text-stroke-width:0.16px;font-weight:bold;">Die wichtigsten Informationen zu Ihrem Tierbestand auf einen Blick!</div>
<div style="left:399.3px;top:106.84px;font-size:8.45px;line-height:8.45px;color:#000;letter-spacing:-0.16px;-webkit-text-stroke-width:0.16px;">Stichtag:</div>
<div style="left:446.4px;top:103.6px;width:89.2px;height:14.4px;background:#fff;border-top:1px solid #707070;border-left:1px solid #707070;border-right:1px solid #e0e0e0;border-bottom:1px solid #e0e0e0"></div>
<div style="left:448.8px;top:107.22px;font-size:8.13px;line-height:8.13px;color:#000;letter-spacing:-0.15px;-webkit-text-stroke-width:0.16px;letter-spacing:-0.05px">10.<span style="margin-left:1.3px">11.</span><span style="margin-left:1.3px">2020</span></div>
<div style="left:522.8px;top:104.6px;width:12px;height:12.4px;background:#f0f0f0;border-top:1px solid #fff;border-left:1px solid #fff;border-right:1px solid #707070;border-bottom:1px solid #707070"></div>
<svg style="position:absolute;left:525.7px;top:109.5px" width="6" height="3" viewBox="0 0 6 3"><path d="M0 0 L6 0 L3 3 Z" fill="#000"/></svg>
<div style="left:392px;top:127.3px;width:805px;height:1.2px;background:#c8c8c8"></div>
<div style="left:392px;top:128.5px;width:805px;height:1px;background:#fff"></div>
<div style="left:394.3px;top:133.3px;width:202px;height:181.5px;border:1px solid #b8b8b8;box-shadow:inset 1px 1px 0 #fff, 1px 1px 0 #fff"></div>
<div style="left:398.5px;top:128.8px;width:97px;height:9px;background:#f0f0f0"></div>
<div style="left:400px;top:130.9px;font-size:8.51px;line-height:8.51px;color:#000;letter-spacing:-0.16px;-webkit-text-stroke-width:0.16px;">Tierbestände zum Stichtag</div>
<div style="left:525.8px;top:146px;width:42px;height:14.5px;background:#fefdd0;border-top:1px solid #a0a0a0;border-left:1px solid #a0a0a0;border-right:1px solid #fff;border-bottom:1px solid #fff"></div>
<div style="left:400.6px;top:150.9px;font-size:8.51px;line-height:8.51px;color:#000;letter-spacing:-0.16px;-webkit-text-stroke-width:0.16px;">Sauen</div>
<div style="left:166.3px;top:149.9px;width:400px;text-align:right;font-size:8.51px;line-height:8.51px;color:#a0a0a0;letter-spacing:-0.16px;-webkit-text-stroke-width:0.16px;">115</div>
<div style="left:525.8px;top:166px;width:42px;height:14.5px;background:#fefdd0;border-top:1px solid #a0a0a0;border-left:1px solid #a0a0a0;border-right:1px solid #fff;border-bottom:1px solid #fff"></div>
<div style="left:406.7px;top:168.7px;font-size:8.51px;line-height:8.51px;color:#000;letter-spacing:-0.16px;-webkit-text-stroke-width:0.16px;">davon Produktivsauen</div>
<div style="left:166.3px;top:169.9px;width:400px;text-align:right;font-size:8.51px;line-height:8.51px;color:#a0a0a0;letter-spacing:-0.16px;-webkit-text-stroke-width:0.16px;">115</div>
<div style="left:525.8px;top:184px;width:42px;height:14.5px;background:#fefdd0;border-top:1px solid #a0a0a0;border-left:1px solid #a0a0a0;border-right:1px solid #fff;border-bottom:1px solid #fff"></div>
<div style="left:406.7px;top:186.7px;font-size:8.51px;line-height:8.51px;color:#000;letter-spacing:-0.16px;-webkit-text-stroke-width:0.16px;">davon Jungsauen</div>
<div style="left:166.3px;top:187.9px;width:400px;text-align:right;font-size:8.51px;line-height:8.51px;color:#a0a0a0;letter-spacing:-0.16px;-webkit-text-stroke-width:0.16px;">17</div>
<div style="left:525.8px;top:202px;width:42px;height:14.5px;background:#fefdd0;border-top:1px solid #a0a0a0;border-left:1px solid #a0a0a0;border-right:1px solid #fff;border-bottom:1px solid #fff"></div>
<div style="left:400.6px;top:204.7px;font-size:8.51px;line-height:8.51px;color:#000;letter-spacing:-0.16px;-webkit-text-stroke-width:0.16px;">Eber</div>
<div style="left:166.3px;top:205.9px;width:400px;text-align:right;font-size:8.51px;line-height:8.51px;color:#a0a0a0;letter-spacing:-0.16px;-webkit-text-stroke-width:0.16px;">2</div>
<div style="left:525.8px;top:220px;width:42px;height:14.5px;background:#fefdd0;border-top:1px solid #a0a0a0;border-left:1px solid #a0a0a0;border-right:1px solid #fff;border-bottom:1px solid #fff"></div>
<div style="left:400.6px;top:222.7px;font-size:8.51px;line-height:8.51px;color:#000;letter-spacing:-0.16px;-webkit-text-stroke-width:0.16px;">Zuchtläufer</div>
<div style="left:166.3px;top:223.9px;width:400px;text-align:right;font-size:8.51px;line-height:8.51px;color:#a0a0a0;letter-spacing:-0.16px;-webkit-text-stroke-width:0.16px;">0</div>
<div style="left:525.8px;top:238.3px;width:42px;height:14.5px;background:#fefdd0;border-top:1px solid #a0a0a0;border-left:1px solid #a0a0a0;border-right:1px solid #fff;border-bottom:1px solid #fff"></div>
<div style="left:400.6px;top:240.7px;font-size:8.51px;line-height:8.51px;color:#000;letter-spacing:-0.16px;-webkit-text-stroke-width:0.16px;">Ammen</div>
<div style="left:166.3px;top:242.2px;width:400px;text-align:right;font-size:8.51px;line-height:8.51px;color:#a0a0a0;letter-spacing:-0.16px;-webkit-text-stroke-width:0.16px;">1</div>
<div style="left:525.8px;top:256px;width:42px;height:14.5px;background:#fefdd0;border-top:1px solid #a0a0a0;border-left:1px solid #a0a0a0;border-right:1px solid #fff;border-bottom:1px solid #fff"></div>
<div style="left:400.6px;top:258.7px;font-size:8.51px;line-height:8.51px;color:#000;letter-spacing:-0.16px;-webkit-text-stroke-width:0.16px;">Saugferkel</div>
<div style="left:166.3px;top:259.9px;width:400px;text-align:right;font-size:8.51px;line-height:8.51px;color:#a0a0a0;letter-spacing:-0.16px;-webkit-text-stroke-width:0.16px;">287</div>
<div style="left:525.8px;top:274px;width:42px;height:14.5px;background:#fefdd0;border-top:1px solid #a0a0a0;border-left:1px solid #a0a0a0;border-right:1px solid #fff;border-bottom:1px solid #fff"></div>
<div style="left:406.7px;top:276.7px;font-size:8.51px;line-height:8.51px;color:#000;letter-spacing:-0.16px;-webkit-text-stroke-width:0.16px;">davon bei künstl. Amme</div>
<div style="left:166.3px;top:277.9px;width:400px;text-align:right;font-size:8.51px;line-height:8.51px;color:#a0a0a0;letter-spacing:-0.16px;-webkit-text-stroke-width:0.16px;">0</div>
<div style="left:525.8px;top:292.3px;width:42px;height:14.5px;background:#fefdd0;border-top:1px solid #a0a0a0;border-left:1px solid #a0a0a0;border-right:1px solid #fff;border-bottom:1px solid #fff"></div>
<div style="left:400.6px;top:294.7px;font-size:8.51px;line-height:8.51px;color:#000;letter-spacing:-0.16px;-webkit-text-stroke-width:0.16px;">Absatzferkel</div>
<div style="left:166.3px;top:296.2px;width:400px;text-align:right;font-size:8.51px;line-height:8.51px;color:#a0a0a0;letter-spacing:-0.16px;-webkit-text-stroke-width:0.16px;">383</div>
<div style="left:394.3px;top:319.4px;width:202px;height:543px;border:1px solid #b8b8b8;box-shadow:inset 1px 1px 0 #fff, 1px 1px 0 #fff"></div>
<div style="left:398px;top:315px;width:112.5px;height:9px;background:#f0f0f0"></div>
<div style="left:399.5px;top:316.8px;font-size:8.51px;line-height:8.51px;color:#000;letter-spacing:-0.16px;-webkit-text-stroke-width:0.16px;">kurzfristige Betriebsindikatoren</div>
<div style="left:402.3px;top:338.3px;font-size:8.51px;line-height:8.51px;color:#000;letter-spacing:-0.16px;-webkit-text-stroke-width:0.16px;">Berücksichtigung der letzten</div>
<div style="left:525.8px;top:335px;width:42.5px;height:15.2px;background:#fff;border-top:1px solid #a0a0a0;border-left:1px solid #a0a0a0;border-right:1px solid #fff;border-bottom:1px solid #fff"></div>
<div style="left:166.3px;top:338.9px;width:400px;text-align:right;font-size:8.51px;line-height:8.51px;color:#000;letter-spacing:-0.16px;-webkit-text-stroke-width:0.16px;">0</div>
<div style="left:570.5px;top:338.3px;font-size:8.51px;line-height:8.51px;color:#000;letter-spacing:-0.16px;-webkit-text-stroke-width:0.16px;">Tage</div>
<div style="left:596.5px;top:128.5px;width:8px;height:734.5px;background:#f8f8f8"></div>
<div style="left:596.2px;top:128.5px;width:1.2px;height:734px;background:#a8a8a8"></div>
<div style="left:599.4px;top:387px;width:3.6px;height:218px;background:linear-gradient(90deg,#c8e0f4,#f4faff);border:1px solid #a8c0d8;border-radius:2px"></div>
<svg style="left:598.8px;top:492.5px" width="4" height="6" viewBox="0 0 4 6"><path d="M3.5 0.5 L1 3 L3.5 5.5" stroke="#000" stroke-width="1.1" fill="none"/></svg>
<div style="left:604.3px;top:129.8px;width:593px;height:314.2px;background:#f0f0f0;border-left:1px solid #a0a0a0;border-top:1px solid #a0a0a0"></div>
<div style="left:604px;top:127.8px;width:593px;height:1px;background:#c8c8c8"></div>
<div style="left:605.2px;top:130.8px;width:578.5px;height:17.6px;background:#ffff00"></div>
<div style="left:759.3px;top:135.17px;font-size:9.36px;line-height:9.36px;color:#ff0000;letter-spacing:-0.18px;-webkit-text-stroke-width:0.16px;font-weight:bold;">anstehende und geplante Arbeiten für Dienstag, den 10.11.2020</div>
<div style="left:1183.8px;top:130.8px;width:13px;height:313px;background:#f4f4f4;border-left:1px solid #e8e8e8"></div>
<div style="left:1184.2px;top:130.8px;width:12.5px;height:13px;background:#f0f0f0;border-top:1px solid #fff;border-left:1px solid #fff;border-right:1px solid #a0a0a0;border-bottom:1px solid #a0a0a0"></div>
<svg style="position:absolute;left:1187px;top:135.75px" width="7" height="3.5" viewBox="0 0 7 3.5"><path d="M0 3.5 L7 3.5 L3.5 0 Z" fill="#000"/></svg>
<div style="left:1184.2px;top:429px;width:12.5px;height:13px;background:#f0f0f0;border-top:1px solid #fff;border-left:1px solid #fff;border-right:1px solid #a0a0a0;border-bottom:1px solid #a0a0a0"></div>
<svg style="position:absolute;left:1187px;top:434.05px" width="7" height="3.5" viewBox="0 0 7 3.5"><path d="M0 0 L7 0 L3.5 3.5 Z" fill="#000"/></svg>
<div style="left:1196.5px;top:128px;width:1px;height:316px;background:#b8b8b8"></div>
<div style="left:622px;top:158px;width:66.7px;height:17.4px;background:#f0f0f0;border-top:1px solid #fcfcfc;border-left:1px solid #fcfcfc;border-right:1px solid #a0a0a0;border-bottom:1px solid #a0a0a0;box-shadow:1px 1px 0 #d8d8d8"></div>
<div style="left:355.35px;top:163.45px;width:600px;text-align:center;font-size:7.97px;line-height:7.97px;color:#000;letter-spacing:-0.15px;-webkit-text-stroke-width:0.16px;">NEXT MobileSau</div>
<div style="left:622px;top:192.7px;width:66.7px;height:17px;background:#f0f0f0;border-top:1px solid #fcfcfc;border-left:1px solid #fcfcfc;border-right:1px solid #a0a0a0;border-bottom:1px solid #a0a0a0;box-shadow:1px 1px 0 #d8d8d8"></div>
<div style="left:355.35px;top:197.5px;width:600px;text-align:center;font-size:8.51px;line-height:8.51px;color:#000;letter-spacing:-0.16px;-webkit-text-stroke-width:0.16px;">Belegen</div>
<div style="left:622px;top:229.3px;width:66.7px;height:17.4px;background:#f0f0f0;border-top:1px solid #fcfcfc;border-left:1px solid #fcfcfc;border-right:1px solid #a0a0a0;border-bottom:1px solid #a0a0a0;box-shadow:1px 1px 0 #d8d8d8"></div>
<div style="left:355.35px;top:234.3px;width:600px;text-align:center;font-size:8.51px;line-height:8.51px;color:#000;letter-spacing:-0.16px;-webkit-text-stroke-width:0.16px;">Abferkeln</div>
<div style="left:622px;top:254px;width:66.7px;height:17.6px;background:#f0f0f0;border-top:1px solid #fcfcfc;border-left:1px solid #fcfcfc;border-right:1px solid #a0a0a0;border-bottom:1px solid #a0a0a0;box-shadow:1px 1px 0 #d8d8d8"></div>
<div style="left:355.35px;top:259.1px;width:600px;text-align:center;font-size:8.51px;line-height:8.51px;color:#000;letter-spacing:-0.16px;-webkit-text-stroke-width:0.16px;">Absetzen</div>
<div style="left:622px;top:277px;width:66.7px;height:17.4px;background:#f0f0f0;border-top:1px solid #fcfcfc;border-left:1px solid #fcfcfc;border-right:1px solid #a0a0a0;border-bottom:1px solid #a0a0a0;box-shadow:1px 1px 0 #d8d8d8"></div>
<div style="left:355.35px;top:282px;width:600px;text-align:center;font-size:8.51px;line-height:8.51px;color:#000;letter-spacing:-0.16px;-webkit-text-stroke-width:0.16px;">Behandlungen</div>
<div style="left:621.5px;top:397.5px;width:67.5px;height:16.5px;background:#f0f0f0;border-top:1px solid #fcfcfc;border-left:1px solid #fcfcfc;border-right:1px solid #a0a0a0;border-bottom:1px solid #a0a0a0;box-shadow:1px 1px 0 #d8d8d8"></div>
<div style="left:355.25px;top:402.05px;width:600px;text-align:center;font-size:8.51px;line-height:8.51px;color:#000;letter-spacing:-0.16px;-webkit-text-stroke-width:0.16px;">Verkauf</div>
<div style="left:736px;top:193px;width:43px;height:15.3px;background:#fefdd0;border-top:1px solid #a0a0a0;border-left:1px solid #a0a0a0;border-right:1px solid #fff;border-bottom:1px solid #fff"></div>
<div style="left:377.5px;top:197px;width:400px;text-align:right;font-size:8.51px;line-height:8.51px;color:#a0a0a0;letter-spacing:-0.16px;-webkit-text-stroke-width:0.16px;">11</div>
<div style="left:785.5px;top:195.8px;font-size:8.51px;line-height:8.51px;color:#000;letter-spacing:-0.16px;-webkit-text-stroke-width:0.16px;">Sau(en) zu belegen</div>
<div style="left:736px;top:230px;width:43px;height:15.3px;background:#fefdd0;border-top:1px solid #a0a0a0;border-left:1px solid #a0a0a0;border-right:1px solid #fff;border-bottom:1px solid #fff"></div>
<div style="left:377.5px;top:234px;width:400px;text-align:right;font-size:8.51px;line-height:8.51px;color:#a0a0a0;letter-spacing:-0.16px;-webkit-text-stroke-width:0.16px;">42</div>
<div style="left:785.5px;top:234.3px;font-size:8.51px;line-height:8.51px;color:#000;letter-spacing:-0.16px;-webkit-text-stroke-width:0.16px;">Sau(en) zum Abferkeln</div>
<div style="left:736px;top:254.5px;width:43px;height:15.3px;background:#fefdd0;border-top:1px solid #a0a0a0;border-left:1px solid #a0a0a0;border-right:1px solid #fff;border-bottom:1px solid #fff"></div>
<div style="left:377.5px;top:258.5px;width:400px;text-align:right;font-size:8.51px;line-height:8.51px;color:#a0a0a0;letter-spacing:-0.16px;-webkit-text-stroke-width:0.16px;">20</div>
<div style="left:785.5px;top:257.3px;font-size:8.51px;line-height:8.51px;color:#000;letter-spacing:-0.16px;-webkit-text-stroke-width:0.16px;">Sau(en) zum Absetzen</div>
<div style="left:736px;top:276.4px;width:43px;height:15.3px;background:#fefdd0;border-top:1px solid #a0a0a0;border-left:1px solid #a0a0a0;border-right:1px solid #fff;border-bottom:1px solid #fff"></div>
<div style="left:377.5px;top:280.4px;width:400px;text-align:right;font-size:8.51px;line-height:8.51px;color:#a0a0a0;letter-spacing:-0.16px;-webkit-text-stroke-width:0.16px;">2</div>
<div style="left:785.5px;top:280px;font-size:8.51px;line-height:8.51px;color:#000;letter-spacing:-0.16px;-webkit-text-stroke-width:0.16px;">Behandlung(en)</div>
<div style="left:736px;top:294.6px;width:43px;height:15.3px;background:#fefdd0;border-top:1px solid #a0a0a0;border-left:1px solid #a0a0a0;border-right:1px solid #fff;border-bottom:1px solid #fff"></div>
<div style="left:377.5px;top:298.6px;width:400px;text-align:right;font-size:8.51px;line-height:8.51px;color:#a0a0a0;letter-spacing:-0.16px;-webkit-text-stroke-width:0.16px;">46</div>
<div style="left:785.5px;top:298.3px;font-size:8.51px;line-height:8.51px;color:#000;letter-spacing:-0.16px;-webkit-text-stroke-width:0.16px;">Sau(en) zu behandeln</div>
<div style="left:736px;top:312.2px;width:43px;height:15.3px;background:#fefdd0;border-top:1px solid #a0a0a0;border-left:1px solid #a0a0a0;border-right:1px solid #fff;border-bottom:1px solid #fff"></div>
<div style="left:377.5px;top:316.2px;width:400px;text-align:right;font-size:8.51px;line-height:8.51px;color:#a0a0a0;letter-spacing:-0.16px;-webkit-text-stroke-width:0.16px;">0</div>
<div style="left:785.5px;top:317px;font-size:8.51px;line-height:8.51px;color:#000;letter-spacing:-0.16px;-webkit-text-stroke-width:0.16px;">Saugferkel zu behandeln</div>
<div style="left:736px;top:396.5px;width:43px;height:15.3px;background:#fefdd0;border-top:1px solid #a0a0a0;border-left:1px solid #a0a0a0;border-right:1px solid #fff;border-bottom:1px solid #fff"></div>
<div style="left:377.5px;top:400.5px;width:400px;text-align:right;font-size:8.51px;line-height:8.51px;color:#a0a0a0;letter-spacing:-0.16px;-webkit-text-stroke-width:0.16px;">383</div>
<div style="left:785.5px;top:400.3px;font-size:8.51px;line-height:8.51px;color:#000;letter-spacing:-0.16px;-webkit-text-stroke-width:0.16px;">Absatzferkel zu verkaufen</div>
<div style="left:736px;top:417.5px;width:43px;height:15.3px;background:#fefdd0;border-top:1px solid #a0a0a0;border-left:1px solid #a0a0a0;border-right:1px solid #fff;border-bottom:1px solid #fff"></div>
<div style="left:377.5px;top:421.5px;width:400px;text-align:right;font-size:8.51px;line-height:8.51px;color:#a0a0a0;letter-spacing:-0.16px;-webkit-text-stroke-width:0.16px;">50</div>
<div style="left:785.5px;top:421.3px;font-size:8.51px;line-height:8.51px;color:#000;letter-spacing:-0.16px;-webkit-text-stroke-width:0.16px;">von künstl. Amme abgesetzt --&gt; keine Prüfung des&nbsp; Alters möglich</div>
<div style="left:701.6px;top:421.3px;font-size:8.51px;line-height:8.51px;color:#000;letter-spacing:-0.16px;-webkit-text-stroke-width:0.16px;">davon</div>
<div style="left:910.4px;top:274.6px;width:230.8px;height:120px;background:#fff;border-top:1px solid #a8a8a8;border-left:1px solid #a8a8a8"></div>
<div style="left:911.3px;top:275.5px;width:74.3px;height:13.6px;background:#c0dcc0;border-left:1px solid #eef6ee;border-right:1px solid #a8c0a8"></div>
<div style="left:986px;top:275.5px;width:59.3px;height:13.6px;background:#c0dcc0;border-left:1px solid #eef6ee;border-right:1px solid #a8c0a8"></div>
<div style="left:1045.8px;top:275.5px;width:75px;height:13.6px;background:#c0dcc0;border-left:1px solid #eef6ee;border-right:1px solid #a8c0a8"></div>
<svg style="left:976.8px;top:276.8px" width="7.5" height="7.5" viewBox="0 0 7.5 7.5"><rect x="0.5" y="0.5" width="6.5" height="6.5" fill="#cde1cd" stroke="#9aae9a" stroke-width="0.9"/><path d="M2 1.8 L3.75 4 L5.5 1.8 M3.75 4 L3.75 6" stroke="#8a9c8a" stroke-width="0.8" fill="none"/></svg>
<svg style="left:1036.3px;top:276.8px" width="7.5" height="7.5" viewBox="0 0 7.5 7.5"><rect x="0.5" y="0.5" width="6.5" height="6.5" fill="#cde1cd" stroke="#9aae9a" stroke-width="0.9"/><path d="M2 1.8 L3.75 4 L5.5 1.8 M3.75 4 L3.75 6" stroke="#8a9c8a" stroke-width="0.8" fill="none"/></svg>
<svg style="left:1111.8px;top:276.8px" width="7.5" height="7.5" viewBox="0 0 7.5 7.5"><rect x="0.5" y="0.5" width="6.5" height="6.5" fill="#cde1cd" stroke="#9aae9a" stroke-width="0.9"/><path d="M2 1.8 L3.75 4 L5.5 1.8 M3.75 4 L3.75 6" stroke="#8a9c8a" stroke-width="0.8" fill="none"/></svg>
<div style="left:913px;top:279.06px;font-size:8.67px;line-height:8.67px;color:#000;letter-spacing:-0.16px;-webkit-text-stroke-width:0.16px;">Verfahren</div>
<div style="left:634.5px;top:279.06px;width:400px;text-align:right;font-size:8.67px;line-height:8.67px;color:#000;letter-spacing:-0.16px;-webkit-text-stroke-width:0.16px;">Anzahl</div>
<div style="left:1047.5px;top:279.06px;font-size:8.67px;line-height:8.67px;color:#000;letter-spacing:-0.16px;-webkit-text-stroke-width:0.16px;">Tierart</div>
<div style="left:911.3px;top:289.1px;width:209.5px;height:27px;background:#fefdd0"></div>
<div style="left:986px;top:302.5px;width:59.3px;height:13.6px;background:#0078d7"></div>
<div style="left:1045.8px;top:302.5px;width:75px;height:13.6px;background:#0078d7"></div>
<div style="left:911.3px;top:289px;width:209.5px;height:1px;background:#b8b8b8"></div>
<div style="left:911.3px;top:302.3px;width:209.5px;height:1px;background:#b8b8b8"></div>
<div style="left:911.3px;top:316px;width:209.5px;height:1px;background:#b8b8b8"></div>
<div style="left:985.6px;top:289px;width:1px;height:27px;background:#b8b8b8"></div>
<div style="left:1045.3px;top:289px;width:1px;height:27px;background:#b8b8b8"></div>
<div style="left:1120.8px;top:289px;width:1px;height:27px;background:#b8b8b8"></div>
<div style="left:913px;top:292.66px;font-size:8.67px;line-height:8.67px;color:#000;letter-spacing:-0.16px;-webkit-text-stroke-width:0.16px;">Coli</div>
<div style="left:643.8px;top:292.66px;width:400px;text-align:right;font-size:8.67px;line-height:8.67px;color:#000;letter-spacing:-0.16px;-webkit-text-stroke-width:0.16px;">25</div>
<div style="left:1047.5px;top:292.66px;font-size:8.67px;line-height:8.67px;color:#000;letter-spacing:-0.16px;-webkit-text-stroke-width:0.16px;">Sauen</div>
<div style="left:913px;top:306.16px;font-size:8.67px;line-height:8.67px;color:#000;letter-spacing:-0.16px;-webkit-text-stroke-width:0.16px;">Jungsauen Sui</div>
<div style="left:643.8px;top:306.16px;width:400px;text-align:right;font-size:8.67px;line-height:8.67px;color:#fff;letter-spacing:-0.16px;-webkit-text-stroke-width:0.16px;">21</div>
<div style="left:1047.5px;top:306.16px;font-size:8.67px;line-height:8.67px;color:#fff;letter-spacing:-0.16px;-webkit-text-stroke-width:0.16px;">Sauen</div>
<div style="left:910.8px;top:376px;width:210.5px;height:18px;background:#f0f0f0;border:1px solid #a8a8a8"></div>
<div style="left:987px;top:377.5px;width:58.5px;height:15px;background:#efefef;border-left:1px solid #c0c0c0;border-top:1px solid #c0c0c0"></div>
<div style="left:643.5px;top:381.16px;width:400px;text-align:right;font-size:8.67px;line-height:8.67px;color:#000;letter-spacing:-0.16px;-webkit-text-stroke-width:0.16px;">46</div>
<div style="left:604px;top:443.7px;width:593px;height:1px;background:#fff"></div>
<div style="left:812.5px;top:446px;width:177.5px;height:5.5px;background:linear-gradient(#e6f0fa,#b8d0e8);border:1px solid #90a8c8;border-radius:3px"></div>
<svg style="left:900px;top:446.6px" width="6" height="4" viewBox="0 0 6 4"><path d="M0.5 3.5 L3 1 L5.5 3.5" stroke="#000" stroke-width="1.1" fill="none"/></svg>
<div style="left:604px;top:451.5px;width:593px;height:1px;background:#fff"></div>
<div style="left:606.3px;top:456.7px;width:590px;height:56.6px;border:1px solid #b8b8b8;box-shadow:inset 1px 1px 0 #fff, 1px 1px 0 #fff"></div>
<div style="left:610.5px;top:452.5px;width:158px;height:8px;background:#f0f0f0"></div>
<div style="left:611.5px;top:454.78px;font-size:8.29px;line-height:8.29px;color:#000;letter-spacing:-0.15px;-webkit-text-stroke-width:0.16px;">Wählen Sie maximal 3 anzuzeigende Werte</div>
<div style="left:613.5px;top:469.4px;width:9px;height:9px;background:#fff;border-top:1px solid #a0a0a0;border-left:1px solid #a0a0a0;border-right:1px solid #f4f4f4;border-bottom:1px solid #f4f4f4"></div>
<svg style="left:614.5px;top:470.4px" width="7" height="7" viewBox="0 0 7 7"><path d="M0.8 3.5 L2.6 5.6 L6.3 1.2" stroke="#000" stroke-width="1.5" fill="none"/></svg>
<div style="left:625px;top:470.3px;font-size:8.51px;line-height:8.51px;color:#000;letter-spacing:-0.16px;-webkit-text-stroke-width:0.16px;">Index</div>
<div style="left:613.5px;top:484.4px;width:9px;height:9px;background:#fff;border-top:1px solid #a0a0a0;border-left:1px solid #a0a0a0;border-right:1px solid #f4f4f4;border-bottom:1px solid #f4f4f4"></div>
<svg style="left:614.5px;top:485.4px" width="7" height="7" viewBox="0 0 7 7"><path d="M0.8 3.5 L2.6 5.6 L6.3 1.2" stroke="#000" stroke-width="1.5" fill="none"/></svg>
<div style="left:625px;top:485.3px;font-size:8.51px;line-height:8.51px;color:#000;letter-spacing:-0.16px;-webkit-text-stroke-width:0.16px;">Güsttage/Wurf</div>
<div style="left:613.5px;top:499.4px;width:9px;height:9px;background:#fff;border-top:1px solid #a0a0a0;border-left:1px solid #a0a0a0;border-right:1px solid #f4f4f4;border-bottom:1px solid #f4f4f4"></div>
<svg style="left:614.5px;top:500.4px" width="7" height="7" viewBox="0 0 7 7"><path d="M0.8 3.5 L2.6 5.6 L6.3 1.2" stroke="#000" stroke-width="1.5" fill="none"/></svg>
<div style="left:625px;top:500.3px;font-size:8.51px;line-height:8.51px;color:#000;letter-spacing:-0.16px;-webkit-text-stroke-width:0.16px;">Zwischenwurfzeit/Wurf</div>
<div style="left:808.5px;top:469.4px;width:9px;height:9px;background:#fff;border-top:1px solid #a0a0a0;border-left:1px solid #a0a0a0;border-right:1px solid #f4f4f4;border-bottom:1px solid #f4f4f4"></div>
<div style="left:820px;top:470.3px;font-size:8.51px;line-height:8.51px;color:#000;letter-spacing:-0.16px;-webkit-text-stroke-width:0.16px;">Würfe/Sau u. Jahr</div>
<div style="left:808.5px;top:484.4px;width:9px;height:9px;background:#fff;border-top:1px solid #a0a0a0;border-left:1px solid #a0a0a0;border-right:1px solid #f4f4f4;border-bottom:1px solid #f4f4f4"></div>
<div style="left:820px;top:485.3px;font-size:8.51px;line-height:8.51px;color:#000;letter-spacing:-0.16px;-webkit-text-stroke-width:0.16px;">leb. geb. F./Sau u. Jahr</div>
<div style="left:808.5px;top:499.4px;width:9px;height:9px;background:#fff;border-top:1px solid #a0a0a0;border-left:1px solid #a0a0a0;border-right:1px solid #f4f4f4;border-bottom:1px solid #f4f4f4"></div>
<div style="left:820px;top:500.3px;font-size:8.51px;line-height:8.51px;color:#000;letter-spacing:-0.16px;-webkit-text-stroke-width:0.16px;">abgesetzte F./Sau u. Jahr</div>
<div style="left:1003.5px;top:469.4px;width:9px;height:9px;background:#fff;border-top:1px solid #a0a0a0;border-left:1px solid #a0a0a0;border-right:1px solid #f4f4f4;border-bottom:1px solid #f4f4f4"></div>
<div style="left:1015px;top:470.3px;font-size:8.51px;line-height:8.51px;color:#000;letter-spacing:-0.16px;-webkit-text-stroke-width:0.16px;">Verluste in %</div>
<div style="left:1003.5px;top:484.4px;width:9px;height:9px;background:#fff;border-top:1px solid #a0a0a0;border-left:1px solid #a0a0a0;border-right:1px solid #f4f4f4;border-bottom:1px solid #f4f4f4"></div>
<div style="left:1015px;top:485.3px;font-size:8.51px;line-height:8.51px;color:#000;letter-spacing:-0.16px;-webkit-text-stroke-width:0.16px;">Anomalien in %</div>
<div style="left:604px;top:514px;width:593px;height:1px;background:#fff"></div>
<div style="left:604.5px;top:515px;width:197.5px;height:312.5px;background:linear-gradient(135deg,#fbfbfb 0%,#e2e2e2 55%,#c6c6c6 100%)"></div>
<div style="left:801px;top:515px;width:1px;height:312.5px;background:#a8a8a8"></div>
<div style="left:604.5px;top:515px;width:1px;height:312.5px;background:#fafafa"></div>
<div style="left:405.8px;top:534.86px;width:600px;text-align:center;font-size:10.33px;line-height:10.33px;color:rgba(0,0,0,0.25);letter-spacing:-0.19px;font-weight:bold;filter:blur(0.5px)">Index</div>
<div style="left:405px;top:533.56px;width:600px;text-align:center;font-size:10.33px;line-height:10.33px;color:#000;letter-spacing:-0.19px;-webkit-text-stroke-width:0.05px;font-weight:bold;">Index</div>
<div style="left:229.7px;top:803.88px;width:400px;text-align:right;font-size:7.7px;line-height:7.7px;color:#858585;letter-spacing:-0.14px;-webkit-text-stroke-width:0.1px;">0</div>
<div style="left:635.5px;top:792.34px;width:155.5px;height:1px;background:rgba(255,255,255,0.22)"></div>
<div style="left:635.5px;top:793.34px;width:155.5px;height:1px;background:rgba(0,0,0,0.02)"></div>
<div style="left:229.7px;top:789.42px;width:400px;text-align:right;font-size:7.7px;line-height:7.7px;color:#858585;letter-spacing:-0.14px;-webkit-text-stroke-width:0.1px;">2</div>
<div style="left:635.5px;top:777.88px;width:155.5px;height:1px;background:rgba(255,255,255,0.22)"></div>
<div style="left:635.5px;top:778.88px;width:155.5px;height:1px;background:rgba(0,0,0,0.02)"></div>
<div style="left:229.7px;top:774.96px;width:400px;text-align:right;font-size:7.7px;line-height:7.7px;color:#858585;letter-spacing:-0.14px;-webkit-text-stroke-width:0.1px;">4</div>
<div style="left:635.5px;top:763.42px;width:155.5px;height:1px;background:rgba(255,255,255,0.22)"></div>
<div style="left:635.5px;top:764.42px;width:155.5px;height:1px;background:rgba(0,0,0,0.02)"></div>
<div style="left:229.7px;top:760.5px;width:400px;text-align:right;font-size:7.7px;line-height:7.7px;color:#858585;letter-spacing:-0.14px;-webkit-text-stroke-width:0.1px;">6</div>
<div style="left:635.5px;top:748.96px;width:155.5px;height:1px;background:rgba(255,255,255,0.22)"></div>
<div style="left:635.5px;top:749.96px;width:155.5px;height:1px;background:rgba(0,0,0,0.02)"></div>
<div style="left:229.7px;top:746.04px;width:400px;text-align:right;font-size:7.7px;line-height:7.7px;color:#858585;letter-spacing:-0.14px;-webkit-text-stroke-width:0.1px;">8</div>
<div style="left:635.5px;top:734.5px;width:155.5px;height:1px;background:rgba(255,255,255,0.22)"></div>
<div style="left:635.5px;top:735.5px;width:155.5px;height:1px;background:rgba(0,0,0,0.02)"></div>
<div style="left:229.7px;top:731.58px;width:400px;text-align:right;font-size:7.7px;line-height:7.7px;color:#858585;letter-spacing:-0.14px;-webkit-text-stroke-width:0.1px;">10</div>
<div style="left:635.5px;top:720.04px;width:155.5px;height:1px;background:rgba(255,255,255,0.22)"></div>
<div style="left:635.5px;top:721.04px;width:155.5px;height:1px;background:rgba(0,0,0,0.02)"></div>
<div style="left:229.7px;top:717.12px;width:400px;text-align:right;font-size:7.7px;line-height:7.7px;color:#858585;letter-spacing:-0.14px;-webkit-text-stroke-width:0.1px;">12</div>
<div style="left:635.5px;top:705.58px;width:155.5px;height:1px;background:rgba(255,255,255,0.22)"></div>
<div style="left:635.5px;top:706.58px;width:155.5px;height:1px;background:rgba(0,0,0,0.02)"></div>
<div style="left:229.7px;top:702.66px;width:400px;text-align:right;font-size:7.7px;line-height:7.7px;color:#858585;letter-spacing:-0.14px;-webkit-text-stroke-width:0.1px;">14</div>
<div style="left:635.5px;top:691.12px;width:155.5px;height:1px;background:rgba(255,255,255,0.22)"></div>
<div style="left:635.5px;top:692.12px;width:155.5px;height:1px;background:rgba(0,0,0,0.02)"></div>
<div style="left:229.7px;top:688.2px;width:400px;text-align:right;font-size:7.7px;line-height:7.7px;color:#858585;letter-spacing:-0.14px;-webkit-text-stroke-width:0.1px;">16</div>
<div style="left:635.5px;top:676.66px;width:155.5px;height:1px;background:rgba(255,255,255,0.22)"></div>
<div style="left:635.5px;top:677.66px;width:155.5px;height:1px;background:rgba(0,0,0,0.02)"></div>
<div style="left:229.7px;top:673.74px;width:400px;text-align:right;font-size:7.7px;line-height:7.7px;color:#858585;letter-spacing:-0.14px;-webkit-text-stroke-width:0.1px;">18</div>
<div style="left:635.5px;top:662.2px;width:155.5px;height:1px;background:rgba(255,255,255,0.22)"></div>
<div style="left:635.5px;top:663.2px;width:155.5px;height:1px;background:rgba(0,0,0,0.02)"></div>
<div style="left:229.7px;top:659.28px;width:400px;text-align:right;font-size:7.7px;line-height:7.7px;color:#858585;letter-spacing:-0.14px;-webkit-text-stroke-width:0.1px;">20</div>
<div style="left:635.5px;top:647.74px;width:155.5px;height:1px;background:rgba(255,255,255,0.22)"></div>
<div style="left:635.5px;top:648.74px;width:155.5px;height:1px;background:rgba(0,0,0,0.02)"></div>
<div style="left:229.7px;top:644.82px;width:400px;text-align:right;font-size:7.7px;line-height:7.7px;color:#858585;letter-spacing:-0.14px;-webkit-text-stroke-width:0.1px;">22</div>
<div style="left:635.5px;top:633.28px;width:155.5px;height:1px;background:rgba(255,255,255,0.22)"></div>
<div style="left:635.5px;top:634.28px;width:155.5px;height:1px;background:rgba(0,0,0,0.02)"></div>
<div style="left:229.7px;top:630.36px;width:400px;text-align:right;font-size:7.7px;line-height:7.7px;color:#858585;letter-spacing:-0.14px;-webkit-text-stroke-width:0.1px;">24</div>
<div style="left:635.5px;top:618.82px;width:155.5px;height:1px;background:rgba(255,255,255,0.22)"></div>
<div style="left:635.5px;top:619.82px;width:155.5px;height:1px;background:rgba(0,0,0,0.02)"></div>
<div style="left:229.7px;top:615.9px;width:400px;text-align:right;font-size:7.7px;line-height:7.7px;color:#858585;letter-spacing:-0.14px;-webkit-text-stroke-width:0.1px;">26</div>
<div style="left:635.5px;top:604.36px;width:155.5px;height:1px;background:rgba(255,255,255,0.22)"></div>
<div style="left:635.5px;top:605.36px;width:155.5px;height:1px;background:rgba(0,0,0,0.02)"></div>
<div style="left:229.7px;top:601.44px;width:400px;text-align:right;font-size:7.7px;line-height:7.7px;color:#858585;letter-spacing:-0.14px;-webkit-text-stroke-width:0.1px;">28</div>
<div style="left:635.5px;top:589.9px;width:155.5px;height:1px;background:rgba(255,255,255,0.22)"></div>
<div style="left:635.5px;top:590.9px;width:155.5px;height:1px;background:rgba(0,0,0,0.02)"></div>
<div style="left:229.7px;top:586.98px;width:400px;text-align:right;font-size:7.7px;line-height:7.7px;color:#858585;letter-spacing:-0.14px;-webkit-text-stroke-width:0.1px;">30</div>
<div style="left:635.5px;top:575.44px;width:155.5px;height:1px;background:rgba(255,255,255,0.22)"></div>
<div style="left:635.5px;top:576.44px;width:155.5px;height:1px;background:rgba(0,0,0,0.02)"></div>
<div style="left:229.7px;top:572.52px;width:400px;text-align:right;font-size:7.7px;line-height:7.7px;color:#858585;letter-spacing:-0.14px;-webkit-text-stroke-width:0.1px;">32</div>
<div style="left:635.5px;top:560.98px;width:155.5px;height:1px;background:rgba(255,255,255,0.22)"></div>
<div style="left:635.5px;top:561.98px;width:155.5px;height:1px;background:rgba(0,0,0,0.02)"></div>
<div style="left:229.7px;top:558.06px;width:400px;text-align:right;font-size:7.7px;line-height:7.7px;color:#858585;letter-spacing:-0.14px;-webkit-text-stroke-width:0.1px;">34</div>
<div style="left:632.1px;top:549px;width:1.9px;height:258.3px;background:repeating-linear-gradient(to top,#9a9a9a 0px,#9a9a9a 1.45px,#fafafa 1.45px,#fafafa 3.62px);background-position:0 0"></div>
<div style="left:630.3px;top:806.7px;width:3px;height:1.2px;background:#8a8a8a"></div>
<div style="left:630.3px;top:792.24px;width:3px;height:1.2px;background:#8a8a8a"></div>
<div style="left:630.3px;top:777.78px;width:3px;height:1.2px;background:#8a8a8a"></div>
<div style="left:630.3px;top:763.32px;width:3px;height:1.2px;background:#8a8a8a"></div>
<div style="left:630.3px;top:748.86px;width:3px;height:1.2px;background:#8a8a8a"></div>
<div style="left:630.3px;top:734.4px;width:3px;height:1.2px;background:#8a8a8a"></div>
<div style="left:630.3px;top:719.94px;width:3px;height:1.2px;background:#8a8a8a"></div>
<div style="left:630.3px;top:705.48px;width:3px;height:1.2px;background:#8a8a8a"></div>
<div style="left:630.3px;top:691.02px;width:3px;height:1.2px;background:#8a8a8a"></div>
<div style="left:630.3px;top:676.56px;width:3px;height:1.2px;background:#8a8a8a"></div>
<div style="left:630.3px;top:662.1px;width:3px;height:1.2px;background:#8a8a8a"></div>
<div style="left:630.3px;top:647.64px;width:3px;height:1.2px;background:#8a8a8a"></div>
<div style="left:630.3px;top:633.18px;width:3px;height:1.2px;background:#8a8a8a"></div>
<div style="left:630.3px;top:618.72px;width:3px;height:1.2px;background:#8a8a8a"></div>
<div style="left:630.3px;top:604.26px;width:3px;height:1.2px;background:#8a8a8a"></div>
<div style="left:630.3px;top:589.8px;width:3px;height:1.2px;background:#8a8a8a"></div>
<div style="left:630.3px;top:575.34px;width:3px;height:1.2px;background:#8a8a8a"></div>
<div style="left:630.3px;top:560.88px;width:3px;height:1.2px;background:#8a8a8a"></div>
<div style="left:633.9px;top:549px;width:1.6px;height:259.3px;background:#000"></div>
<div style="left:633.9px;top:806.9px;width:157.1px;height:1.6px;background:#000"></div>
<div style="left:682.8px;top:576.37px;width:31.5px;height:230.93px;background:#008000;border:1px solid #222;border-bottom:none"></div>
<div style="left:698.05px;top:569.37px;width:1px;height:7px;background:rgba(255,255,255,0.8)"></div>
<div style="left:683.29px;top:550.37px;width:33.52px;height:14px;background:rgba(0,0,0,0.25);transform:rotate(-45deg);filter:blur(0.6px)"></div>
<div style="left:681.79px;top:548.87px;width:33.52px;height:14px;background:#fefee8;border:1px solid #555;transform:rotate(-45deg);font-size:8.2px;line-height:12px;text-align:center;color:#222;letter-spacing:-0.1px;-webkit-text-stroke-width:0.15px">31,94</div>
<div style="left:742.8px;top:577.82px;width:31.7px;height:229.48px;background:#ffff00;border:1px solid #222;border-bottom:none"></div>
<div style="left:758.15px;top:570.82px;width:1px;height:7px;background:rgba(255,255,255,0.8)"></div>
<div style="left:743.39px;top:551.82px;width:33.52px;height:14px;background:rgba(0,0,0,0.25);transform:rotate(-45deg);filter:blur(0.6px)"></div>
<div style="left:741.89px;top:550.32px;width:33.52px;height:14px;background:#fefee8;border:1px solid #555;transform:rotate(-45deg);font-size:8.2px;line-height:12px;text-align:center;color:#222;letter-spacing:-0.1px;-webkit-text-stroke-width:0.15px">31,74</div>
<div style="left:802px;top:515px;width:196px;height:312.5px;background:linear-gradient(135deg,#fbfbfb 0%,#e2e2e2 55%,#c6c6c6 100%)"></div>
<div style="left:997px;top:515px;width:1px;height:312.5px;background:#a8a8a8"></div>
<div style="left:802px;top:515px;width:1px;height:312.5px;background:#fafafa"></div>
<div style="left:601.1px;top:534.86px;width:600px;text-align:center;font-size:10.33px;line-height:10.33px;color:rgba(0,0,0,0.25);letter-spacing:-0.19px;font-weight:bold;filter:blur(0.5px)">Güsttage/Wurf</div>
<div style="left:600.3px;top:533.56px;width:600px;text-align:center;font-size:10.33px;line-height:10.33px;color:#000;letter-spacing:-0.19px;-webkit-text-stroke-width:0.05px;font-weight:bold;">Güsttage/Wurf</div>
<div style="left:432.1px;top:803.88px;width:400px;text-align:right;font-size:7.7px;line-height:7.7px;color:#858585;letter-spacing:-0.14px;-webkit-text-stroke-width:0.1px;">0</div>
<div style="left:837.9px;top:796.27px;width:152.1px;height:1px;background:rgba(255,255,255,0.22)"></div>
<div style="left:837.9px;top:797.27px;width:152.1px;height:1px;background:rgba(0,0,0,0.02)"></div>
<div style="left:432.1px;top:793.35px;width:400px;text-align:right;font-size:7.7px;line-height:7.7px;color:#858585;letter-spacing:-0.14px;-webkit-text-stroke-width:0.1px;">0,5</div>
<div style="left:837.9px;top:785.74px;width:152.1px;height:1px;background:rgba(255,255,255,0.22)"></div>
<div style="left:837.9px;top:786.74px;width:152.1px;height:1px;background:rgba(0,0,0,0.02)"></div>
<div style="left:432.1px;top:782.82px;width:400px;text-align:right;font-size:7.7px;line-height:7.7px;color:#858585;letter-spacing:-0.14px;-webkit-text-stroke-width:0.1px;">1</div>
<div style="left:837.9px;top:775.21px;width:152.1px;height:1px;background:rgba(255,255,255,0.22)"></div>
<div style="left:837.9px;top:776.21px;width:152.1px;height:1px;background:rgba(0,0,0,0.02)"></div>
<div style="left:432.1px;top:772.29px;width:400px;text-align:right;font-size:7.7px;line-height:7.7px;color:#858585;letter-spacing:-0.14px;-webkit-text-stroke-width:0.1px;">1,5</div>
<div style="left:837.9px;top:764.68px;width:152.1px;height:1px;background:rgba(255,255,255,0.22)"></div>
<div style="left:837.9px;top:765.68px;width:152.1px;height:1px;background:rgba(0,0,0,0.02)"></div>
<div style="left:432.1px;top:761.76px;width:400px;text-align:right;font-size:7.7px;line-height:7.7px;color:#858585;letter-spacing:-0.14px;-webkit-text-stroke-width:0.1px;">2</div>
<div style="left:837.9px;top:754.15px;width:152.1px;height:1px;background:rgba(255,255,255,0.22)"></div>
<div style="left:837.9px;top:755.15px;width:152.1px;height:1px;background:rgba(0,0,0,0.02)"></div>
<div style="left:432.1px;top:751.23px;width:400px;text-align:right;font-size:7.7px;line-height:7.7px;color:#858585;letter-spacing:-0.14px;-webkit-text-stroke-width:0.1px;">2,5</div>
<div style="left:837.9px;top:743.62px;width:152.1px;height:1px;background:rgba(255,255,255,0.22)"></div>
<div style="left:837.9px;top:744.62px;width:152.1px;height:1px;background:rgba(0,0,0,0.02)"></div>
<div style="left:432.1px;top:740.7px;width:400px;text-align:right;font-size:7.7px;line-height:7.7px;color:#858585;letter-spacing:-0.14px;-webkit-text-stroke-width:0.1px;">3</div>
<div style="left:837.9px;top:733.09px;width:152.1px;height:1px;background:rgba(255,255,255,0.22)"></div>
<div style="left:837.9px;top:734.09px;width:152.1px;height:1px;background:rgba(0,0,0,0.02)"></div>
<div style="left:432.1px;top:730.17px;width:400px;text-align:right;font-size:7.7px;line-height:7.7px;color:#858585;letter-spacing:-0.14px;-webkit-text-stroke-width:0.1px;">3,5</div>
<div style="left:837.9px;top:722.56px;width:152.1px;height:1px;background:rgba(255,255,255,0.22)"></div>
<div style="left:837.9px;top:723.56px;width:152.1px;height:1px;background:rgba(0,0,0,0.02)"></div>
<div style="left:432.1px;top:719.64px;width:400px;text-align:right;font-size:7.7px;line-height:7.7px;color:#858585;letter-spacing:-0.14px;-webkit-text-stroke-width:0.1px;">4</div>
<div style="left:837.9px;top:712.03px;width:152.1px;height:1px;background:rgba(255,255,255,0.22)"></div>
<div style="left:837.9px;top:713.03px;width:152.1px;height:1px;background:rgba(0,0,0,0.02)"></div>
<div style="left:432.1px;top:709.11px;width:400px;text-align:right;font-size:7.7px;line-height:7.7px;color:#858585;letter-spacing:-0.14px;-webkit-text-stroke-width:0.1px;">4,5</div>
<div style="left:837.9px;top:701.5px;width:152.1px;height:1px;background:rgba(255,255,255,0.22)"></div>
<div style="left:837.9px;top:702.5px;width:152.1px;height:1px;background:rgba(0,0,0,0.02)"></div>
<div style="left:432.1px;top:698.58px;width:400px;text-align:right;font-size:7.7px;line-height:7.7px;color:#858585;letter-spacing:-0.14px;-webkit-text-stroke-width:0.1px;">5</div>
<div style="left:837.9px;top:690.97px;width:152.1px;height:1px;background:rgba(255,255,255,0.22)"></div>
<div style="left:837.9px;top:691.97px;width:152.1px;height:1px;background:rgba(0,0,0,0.02)"></div>
<div style="left:432.1px;top:688.05px;width:400px;text-align:right;font-size:7.7px;line-height:7.7px;color:#858585;letter-spacing:-0.14px;-webkit-text-stroke-width:0.1px;">5,5</div>
<div style="left:837.9px;top:680.44px;width:152.1px;height:1px;background:rgba(255,255,255,0.22)"></div>
<div style="left:837.9px;top:681.44px;width:152.1px;height:1px;background:rgba(0,0,0,0.02)"></div>
<div style="left:432.1px;top:677.52px;width:400px;text-align:right;font-size:7.7px;line-height:7.7px;color:#858585;letter-spacing:-0.14px;-webkit-text-stroke-width:0.1px;">6</div>
<div style="left:837.9px;top:669.91px;width:152.1px;height:1px;background:rgba(255,255,255,0.22)"></div>
<div style="left:837.9px;top:670.91px;width:152.1px;height:1px;background:rgba(0,0,0,0.02)"></div>
<div style="left:432.1px;top:666.99px;width:400px;text-align:right;font-size:7.7px;line-height:7.7px;color:#858585;letter-spacing:-0.14px;-webkit-text-stroke-width:0.1px;">6,5</div>
<div style="left:837.9px;top:659.38px;width:152.1px;height:1px;background:rgba(255,255,255,0.22)"></div>
<div style="left:837.9px;top:660.38px;width:152.1px;height:1px;background:rgba(0,0,0,0.02)"></div>
<div style="left:432.1px;top:656.46px;width:400px;text-align:right;font-size:7.7px;line-height:7.7px;color:#858585;letter-spacing:-0.14px;-webkit-text-stroke-width:0.1px;">7</div>
<div style="left:837.9px;top:648.85px;width:152.1px;height:1px;background:rgba(255,255,255,0.22)"></div>
<div style="left:837.9px;top:649.85px;width:152.1px;height:1px;background:rgba(0,0,0,0.02)"></div>
<div style="left:432.1px;top:645.93px;width:400px;text-align:right;font-size:7.7px;line-height:7.7px;color:#858585;letter-spacing:-0.14px;-webkit-text-stroke-width:0.1px;">7,5</div>
<div style="left:837.9px;top:638.32px;width:152.1px;height:1px;background:rgba(255,255,255,0.22)"></div>
<div style="left:837.9px;top:639.32px;width:152.1px;height:1px;background:rgba(0,0,0,0.02)"></div>
<div style="left:432.1px;top:635.4px;width:400px;text-align:right;font-size:7.7px;line-height:7.7px;color:#858585;letter-spacing:-0.14px;-webkit-text-stroke-width:0.1px;">8</div>
<div style="left:837.9px;top:627.79px;width:152.1px;height:1px;background:rgba(255,255,255,0.22)"></div>
<div style="left:837.9px;top:628.79px;width:152.1px;height:1px;background:rgba(0,0,0,0.02)"></div>
<div style="left:432.1px;top:624.87px;width:400px;text-align:right;font-size:7.7px;line-height:7.7px;color:#858585;letter-spacing:-0.14px;-webkit-text-stroke-width:0.1px;">8,5</div>
<div style="left:837.9px;top:617.26px;width:152.1px;height:1px;background:rgba(255,255,255,0.22)"></div>
<div style="left:837.9px;top:618.26px;width:152.1px;height:1px;background:rgba(0,0,0,0.02)"></div>
<div style="left:432.1px;top:614.34px;width:400px;text-align:right;font-size:7.7px;line-height:7.7px;color:#858585;letter-spacing:-0.14px;-webkit-text-stroke-width:0.1px;">9</div>
<div style="left:837.9px;top:606.73px;width:152.1px;height:1px;background:rgba(255,255,255,0.22)"></div>
<div style="left:837.9px;top:607.73px;width:152.1px;height:1px;background:rgba(0,0,0,0.02)"></div>
<div style="left:432.1px;top:603.81px;width:400px;text-align:right;font-size:7.7px;line-height:7.7px;color:#858585;letter-spacing:-0.14px;-webkit-text-stroke-width:0.1px;">9,5</div>
<div style="left:837.9px;top:596.2px;width:152.1px;height:1px;background:rgba(255,255,255,0.22)"></div>
<div style="left:837.9px;top:597.2px;width:152.1px;height:1px;background:rgba(0,0,0,0.02)"></div>
<div style="left:432.1px;top:593.28px;width:400px;text-align:right;font-size:7.7px;line-height:7.7px;color:#858585;letter-spacing:-0.14px;-webkit-text-stroke-width:0.1px;">10</div>
<div style="left:837.9px;top:585.67px;width:152.1px;height:1px;background:rgba(255,255,255,0.22)"></div>
<div style="left:837.9px;top:586.67px;width:152.1px;height:1px;background:rgba(0,0,0,0.02)"></div>
<div style="left:432.1px;top:582.75px;width:400px;text-align:right;font-size:7.7px;line-height:7.7px;color:#858585;letter-spacing:-0.14px;-webkit-text-stroke-width:0.1px;">10,5</div>
<div style="left:837.9px;top:575.14px;width:152.1px;height:1px;background:rgba(255,255,255,0.22)"></div>
<div style="left:837.9px;top:576.14px;width:152.1px;height:1px;background:rgba(0,0,0,0.02)"></div>
<div style="left:432.1px;top:572.22px;width:400px;text-align:right;font-size:7.7px;line-height:7.7px;color:#858585;letter-spacing:-0.14px;-webkit-text-stroke-width:0.1px;">11</div>
<div style="left:837.9px;top:564.61px;width:152.1px;height:1px;background:rgba(255,255,255,0.22)"></div>
<div style="left:837.9px;top:565.61px;width:152.1px;height:1px;background:rgba(0,0,0,0.02)"></div>
<div style="left:432.1px;top:561.69px;width:400px;text-align:right;font-size:7.7px;line-height:7.7px;color:#858585;letter-spacing:-0.14px;-webkit-text-stroke-width:0.1px;">11,5</div>
<div style="left:837.9px;top:554.08px;width:152.1px;height:1px;background:rgba(255,255,255,0.22)"></div>
<div style="left:837.9px;top:555.08px;width:152.1px;height:1px;background:rgba(0,0,0,0.02)"></div>
<div style="left:432.1px;top:551.16px;width:400px;text-align:right;font-size:7.7px;line-height:7.7px;color:#858585;letter-spacing:-0.14px;-webkit-text-stroke-width:0.1px;">12</div>
<div style="left:834.5px;top:549px;width:1.9px;height:258.3px;background:repeating-linear-gradient(to top,#9a9a9a 0px,#9a9a9a 2.11px,#fafafa 2.11px,#fafafa 5.27px);background-position:0 0"></div>
<div style="left:832.7px;top:806.7px;width:3px;height:1.2px;background:#8a8a8a"></div>
<div style="left:832.7px;top:796.17px;width:3px;height:1.2px;background:#8a8a8a"></div>
<div style="left:832.7px;top:785.64px;width:3px;height:1.2px;background:#8a8a8a"></div>
<div style="left:832.7px;top:775.11px;width:3px;height:1.2px;background:#8a8a8a"></div>
<div style="left:832.7px;top:764.58px;width:3px;height:1.2px;background:#8a8a8a"></div>
<div style="left:832.7px;top:754.05px;width:3px;height:1.2px;background:#8a8a8a"></div>
<div style="left:832.7px;top:743.52px;width:3px;height:1.2px;background:#8a8a8a"></div>
<div style="left:832.7px;top:732.99px;width:3px;height:1.2px;background:#8a8a8a"></div>
<div style="left:832.7px;top:722.46px;width:3px;height:1.2px;background:#8a8a8a"></div>
<div style="left:832.7px;top:711.93px;width:3px;height:1.2px;background:#8a8a8a"></div>
<div style="left:832.7px;top:701.4px;width:3px;height:1.2px;background:#8a8a8a"></div>
<div style="left:832.7px;top:690.87px;width:3px;height:1.2px;background:#8a8a8a"></div>
<div style="left:832.7px;top:680.34px;width:3px;height:1.2px;background:#8a8a8a"></div>
<div style="left:832.7px;top:669.81px;width:3px;height:1.2px;background:#8a8a8a"></div>
<div style="left:832.7px;top:659.28px;width:3px;height:1.2px;background:#8a8a8a"></div>
<div style="left:832.7px;top:648.75px;width:3px;height:1.2px;background:#8a8a8a"></div>
<div style="left:832.7px;top:638.22px;width:3px;height:1.2px;background:#8a8a8a"></div>
<div style="left:832.7px;top:627.69px;width:3px;height:1.2px;background:#8a8a8a"></div>
<div style="left:832.7px;top:617.16px;width:3px;height:1.2px;background:#8a8a8a"></div>
<div style="left:832.7px;top:606.63px;width:3px;height:1.2px;background:#8a8a8a"></div>
<div style="left:832.7px;top:596.1px;width:3px;height:1.2px;background:#8a8a8a"></div>
<div style="left:832.7px;top:585.57px;width:3px;height:1.2px;background:#8a8a8a"></div>
<div style="left:832.7px;top:575.04px;width:3px;height:1.2px;background:#8a8a8a"></div>
<div style="left:832.7px;top:564.51px;width:3px;height:1.2px;background:#8a8a8a"></div>
<div style="left:832.7px;top:553.98px;width:3px;height:1.2px;background:#8a8a8a"></div>
<div style="left:836.3px;top:549px;width:1.6px;height:259.3px;background:#000"></div>
<div style="left:836.3px;top:806.9px;width:153.7px;height:1.6px;background:#000"></div>
<div style="left:855.5px;top:680.94px;width:28.5px;height:126.36px;background:#ff0000;border:1px solid #222;border-bottom:none"></div>
<div style="left:869.25px;top:673.94px;width:1px;height:7px;background:rgba(255,255,255,0.8)"></div>
<div style="left:862.47px;top:654.94px;width:17.56px;height:14px;background:rgba(0,0,0,0.25);transform:rotate(-45deg);filter:blur(0.6px)"></div>
<div style="left:860.97px;top:653.44px;width:17.56px;height:14px;background:#fefee8;border:1px solid #555;transform:rotate(-45deg);font-size:8.2px;line-height:12px;text-align:center;color:#222;letter-spacing:-0.1px;-webkit-text-stroke-width:0.15px">6</div>
<div style="left:884px;top:576.69px;width:29.6px;height:230.61px;background:#008000;border:1px solid #222;border-bottom:none"></div>
<div style="left:898.3px;top:569.69px;width:1px;height:7px;background:rgba(255,255,255,0.8)"></div>
<div style="left:883.54px;top:550.69px;width:33.52px;height:14px;background:rgba(0,0,0,0.25);transform:rotate(-45deg);filter:blur(0.6px)"></div>
<div style="left:882.04px;top:549.19px;width:33.52px;height:14px;background:#fefee8;border:1px solid #555;transform:rotate(-45deg);font-size:8.2px;line-height:12px;text-align:center;color:#222;letter-spacing:-0.1px;-webkit-text-stroke-width:0.15px">10,95</div>
<div style="left:941.2px;top:659.88px;width:29.6px;height:147.42px;background:#ffff00;border:1px solid #222;border-bottom:none"></div>
<div style="left:955.5px;top:652.88px;width:1px;height:7px;background:rgba(255,255,255,0.8)"></div>
<div style="left:948.72px;top:633.88px;width:17.56px;height:14px;background:rgba(0,0,0,0.25);transform:rotate(-45deg);filter:blur(0.6px)"></div>
<div style="left:947.22px;top:632.38px;width:17.56px;height:14px;background:#fefee8;border:1px solid #555;transform:rotate(-45deg);font-size:8.2px;line-height:12px;text-align:center;color:#222;letter-spacing:-0.1px;-webkit-text-stroke-width:0.15px">7</div>
<div style="left:998px;top:515px;width:199px;height:312.5px;background:linear-gradient(135deg,#fbfbfb 0%,#e2e2e2 55%,#c6c6c6 100%)"></div>
<div style="left:1196px;top:515px;width:1px;height:312.5px;background:#a8a8a8"></div>
<div style="left:998px;top:515px;width:1px;height:312.5px;background:#fafafa"></div>
<div style="left:797.8px;top:534.86px;width:600px;text-align:center;font-size:10.33px;line-height:10.33px;color:rgba(0,0,0,0.25);letter-spacing:-0.19px;font-weight:bold;filter:blur(0.5px)">Zwischenwurfzeit/Wurf</div>
<div style="left:797px;top:533.56px;width:600px;text-align:center;font-size:10.33px;line-height:10.33px;color:#000;letter-spacing:-0.19px;-webkit-text-stroke-width:0.05px;font-weight:bold;">Zwischenwurfzeit/Wurf</div>
<div style="left:626px;top:803.88px;width:400px;text-align:right;font-size:7.7px;line-height:7.7px;color:#858585;letter-spacing:-0.14px;-webkit-text-stroke-width:0.1px;">0</div>
<div style="left:1031.8px;top:791.65px;width:154.2px;height:1px;background:rgba(255,255,255,0.22)"></div>
<div style="left:1031.8px;top:792.65px;width:154.2px;height:1px;background:rgba(0,0,0,0.02)"></div>
<div style="left:626px;top:788.73px;width:400px;text-align:right;font-size:7.7px;line-height:7.7px;color:#858585;letter-spacing:-0.14px;-webkit-text-stroke-width:0.1px;">10</div>
<div style="left:1031.8px;top:776.5px;width:154.2px;height:1px;background:rgba(255,255,255,0.22)"></div>
<div style="left:1031.8px;top:777.5px;width:154.2px;height:1px;background:rgba(0,0,0,0.02)"></div>
<div style="left:626px;top:773.58px;width:400px;text-align:right;font-size:7.7px;line-height:7.7px;color:#858585;letter-spacing:-0.14px;-webkit-text-stroke-width:0.1px;">20</div>
<div style="left:1031.8px;top:761.35px;width:154.2px;height:1px;background:rgba(255,255,255,0.22)"></div>
<div style="left:1031.8px;top:762.35px;width:154.2px;height:1px;background:rgba(0,0,0,0.02)"></div>
<div style="left:626px;top:758.43px;width:400px;text-align:right;font-size:7.7px;line-height:7.7px;color:#858585;letter-spacing:-0.14px;-webkit-text-stroke-width:0.1px;">30</div>
<div style="left:1031.8px;top:746.2px;width:154.2px;height:1px;background:rgba(255,255,255,0.22)"></div>
<div style="left:1031.8px;top:747.2px;width:154.2px;height:1px;background:rgba(0,0,0,0.02)"></div>
<div style="left:626px;top:743.28px;width:400px;text-align:right;font-size:7.7px;line-height:7.7px;color:#858585;letter-spacing:-0.14px;-webkit-text-stroke-width:0.1px;">40</div>
<div style="left:1031.8px;top:731.05px;width:154.2px;height:1px;background:rgba(255,255,255,0.22)"></div>
<div style="left:1031.8px;top:732.05px;width:154.2px;height:1px;background:rgba(0,0,0,0.02)"></div>
<div style="left:626px;top:728.13px;width:400px;text-align:right;font-size:7.7px;line-height:7.7px;color:#858585;letter-spacing:-0.14px;-webkit-text-stroke-width:0.1px;">50</div>
<div style="left:1031.8px;top:715.9px;width:154.2px;height:1px;background:rgba(255,255,255,0.22)"></div>
<div style="left:1031.8px;top:716.9px;width:154.2px;height:1px;background:rgba(0,0,0,0.02)"></div>
<div style="left:626px;top:712.98px;width:400px;text-align:right;font-size:7.7px;line-height:7.7px;color:#858585;letter-spacing:-0.14px;-webkit-text-stroke-width:0.1px;">60</div>
<div style="left:1031.8px;top:700.75px;width:154.2px;height:1px;background:rgba(255,255,255,0.22)"></div>
<div style="left:1031.8px;top:701.75px;width:154.2px;height:1px;background:rgba(0,0,0,0.02)"></div>
<div style="left:626px;top:697.83px;width:400px;text-align:right;font-size:7.7px;line-height:7.7px;color:#858585;letter-spacing:-0.14px;-webkit-text-stroke-width:0.1px;">70</div>
<div style="left:1031.8px;top:685.6px;width:154.2px;height:1px;background:rgba(255,255,255,0.22)"></div>
<div style="left:1031.8px;top:686.6px;width:154.2px;height:1px;background:rgba(0,0,0,0.02)"></div>
<div style="left:626px;top:682.68px;width:400px;text-align:right;font-size:7.7px;line-height:7.7px;color:#858585;letter-spacing:-0.14px;-webkit-text-stroke-width:0.1px;">80</div>
<div style="left:1031.8px;top:670.45px;width:154.2px;height:1px;background:rgba(255,255,255,0.22)"></div>
<div style="left:1031.8px;top:671.45px;width:154.2px;height:1px;background:rgba(0,0,0,0.02)"></div>
<div style="left:626px;top:667.53px;width:400px;text-align:right;font-size:7.7px;line-height:7.7px;color:#858585;letter-spacing:-0.14px;-webkit-text-stroke-width:0.1px;">90</div>
<div style="left:1031.8px;top:655.3px;width:154.2px;height:1px;background:rgba(255,255,255,0.22)"></div>
<div style="left:1031.8px;top:656.3px;width:154.2px;height:1px;background:rgba(0,0,0,0.02)"></div>
<div style="left:626px;top:652.38px;width:400px;text-align:right;font-size:7.7px;line-height:7.7px;color:#858585;letter-spacing:-0.14px;-webkit-text-stroke-width:0.1px;">100</div>
<div style="left:1031.8px;top:640.15px;width:154.2px;height:1px;background:rgba(255,255,255,0.22)"></div>
<div style="left:1031.8px;top:641.15px;width:154.2px;height:1px;background:rgba(0,0,0,0.02)"></div>
<div style="left:626px;top:637.23px;width:400px;text-align:right;font-size:7.7px;line-height:7.7px;color:#858585;letter-spacing:-0.14px;-webkit-text-stroke-width:0.1px;">110</div>
<div style="left:1031.8px;top:625px;width:154.2px;height:1px;background:rgba(255,255,255,0.22)"></div>
<div style="left:1031.8px;top:626px;width:154.2px;height:1px;background:rgba(0,0,0,0.02)"></div>
<div style="left:626px;top:622.08px;width:400px;text-align:right;font-size:7.7px;line-height:7.7px;color:#858585;letter-spacing:-0.14px;-webkit-text-stroke-width:0.1px;">120</div>
<div style="left:1031.8px;top:609.85px;width:154.2px;height:1px;background:rgba(255,255,255,0.22)"></div>
<div style="left:1031.8px;top:610.85px;width:154.2px;height:1px;background:rgba(0,0,0,0.02)"></div>
<div style="left:626px;top:606.93px;width:400px;text-align:right;font-size:7.7px;line-height:7.7px;color:#858585;letter-spacing:-0.14px;-webkit-text-stroke-width:0.1px;">130</div>
<div style="left:1031.8px;top:594.7px;width:154.2px;height:1px;background:rgba(255,255,255,0.22)"></div>
<div style="left:1031.8px;top:595.7px;width:154.2px;height:1px;background:rgba(0,0,0,0.02)"></div>
<div style="left:626px;top:591.78px;width:400px;text-align:right;font-size:7.7px;line-height:7.7px;color:#858585;letter-spacing:-0.14px;-webkit-text-stroke-width:0.1px;">140</div>
<div style="left:1031.8px;top:579.55px;width:154.2px;height:1px;background:rgba(255,255,255,0.22)"></div>
<div style="left:1031.8px;top:580.55px;width:154.2px;height:1px;background:rgba(0,0,0,0.02)"></div>
<div style="left:626px;top:576.63px;width:400px;text-align:right;font-size:7.7px;line-height:7.7px;color:#858585;letter-spacing:-0.14px;-webkit-text-stroke-width:0.1px;">150</div>
<div style="left:1031.8px;top:564.4px;width:154.2px;height:1px;background:rgba(255,255,255,0.22)"></div>
<div style="left:1031.8px;top:565.4px;width:154.2px;height:1px;background:rgba(0,0,0,0.02)"></div>
<div style="left:626px;top:561.48px;width:400px;text-align:right;font-size:7.7px;line-height:7.7px;color:#858585;letter-spacing:-0.14px;-webkit-text-stroke-width:0.1px;">160</div>
<div style="left:1031.8px;top:549.25px;width:154.2px;height:1px;background:rgba(255,255,255,0.22)"></div>
<div style="left:1031.8px;top:550.25px;width:154.2px;height:1px;background:rgba(0,0,0,0.02)"></div>
<div style="left:626px;top:546.33px;width:400px;text-align:right;font-size:7.7px;line-height:7.7px;color:#858585;letter-spacing:-0.14px;-webkit-text-stroke-width:0.1px;">170</div>
<div style="left:1028.4px;top:549px;width:1.9px;height:258.3px;background:repeating-linear-gradient(to top,#9a9a9a 0px,#9a9a9a 1.51px,#fafafa 1.51px,#fafafa 3.79px);background-position:0 0"></div>
<div style="left:1026.6px;top:806.7px;width:3px;height:1.2px;background:#8a8a8a"></div>
<div style="left:1026.6px;top:791.55px;width:3px;height:1.2px;background:#8a8a8a"></div>
<div style="left:1026.6px;top:776.4px;width:3px;height:1.2px;background:#8a8a8a"></div>
<div style="left:1026.6px;top:761.25px;width:3px;height:1.2px;background:#8a8a8a"></div>
<div style="left:1026.6px;top:746.1px;width:3px;height:1.2px;background:#8a8a8a"></div>
<div style="left:1026.6px;top:730.95px;width:3px;height:1.2px;background:#8a8a8a"></div>
<div style="left:1026.6px;top:715.8px;width:3px;height:1.2px;background:#8a8a8a"></div>
<div style="left:1026.6px;top:700.65px;width:3px;height:1.2px;background:#8a8a8a"></div>
<div style="left:1026.6px;top:685.5px;width:3px;height:1.2px;background:#8a8a8a"></div>
<div style="left:1026.6px;top:670.35px;width:3px;height:1.2px;background:#8a8a8a"></div>
<div style="left:1026.6px;top:655.2px;width:3px;height:1.2px;background:#8a8a8a"></div>
<div style="left:1026.6px;top:640.05px;width:3px;height:1.2px;background:#8a8a8a"></div>
<div style="left:1026.6px;top:624.9px;width:3px;height:1.2px;background:#8a8a8a"></div>
<div style="left:1026.6px;top:609.75px;width:3px;height:1.2px;background:#8a8a8a"></div>
<div style="left:1026.6px;top:594.6px;width:3px;height:1.2px;background:#8a8a8a"></div>
<div style="left:1026.6px;top:579.45px;width:3px;height:1.2px;background:#8a8a8a"></div>
<div style="left:1026.6px;top:564.3px;width:3px;height:1.2px;background:#8a8a8a"></div>
<div style="left:1026.6px;top:549.15px;width:3px;height:1.2px;background:#8a8a8a"></div>
<div style="left:1030.2px;top:549px;width:1.6px;height:259.3px;background:#000"></div>
<div style="left:1030.2px;top:806.9px;width:155.8px;height:1.6px;background:#000"></div>
<div style="left:1050.5px;top:576.57px;width:29px;height:230.73px;background:#ff0000;border:1px solid #222;border-bottom:none"></div>
<div style="left:1064.5px;top:569.57px;width:1px;height:7px;background:rgba(255,255,255,0.8)"></div>
<div style="left:1049.74px;top:550.57px;width:33.52px;height:14px;background:rgba(0,0,0,0.25);transform:rotate(-45deg);filter:blur(0.6px)"></div>
<div style="left:1048.24px;top:549.07px;width:33.52px;height:14px;background:#fefee8;border:1px solid #555;transform:rotate(-45deg);font-size:8.2px;line-height:12px;text-align:center;color:#222;letter-spacing:-0.1px;-webkit-text-stroke-width:0.15px">152,3</div>
<div style="left:1079.5px;top:578.81px;width:29.1px;height:228.49px;background:#008000;border:1px solid #222;border-bottom:none"></div>
<div style="left:1093.55px;top:571.81px;width:1px;height:7px;background:rgba(255,255,255,0.8)"></div>
<div style="left:1076.51px;top:552.81px;width:38.08px;height:14px;background:rgba(0,0,0,0.25);transform:rotate(-45deg);filter:blur(0.6px)"></div>
<div style="left:1075.01px;top:551.31px;width:38.08px;height:14px;background:#fefee8;border:1px solid #555;transform:rotate(-45deg);font-size:8.2px;line-height:12px;text-align:center;color:#222;letter-spacing:-0.1px;-webkit-text-stroke-width:0.15px">150,82</div>
<div style="left:1136.2px;top:583.58px;width:29.6px;height:223.72px;background:#ffff00;border:1px solid #222;border-bottom:none"></div>
<div style="left:1150.5px;top:576.58px;width:1px;height:7px;background:rgba(255,255,255,0.8)"></div>
<div style="left:1133.46px;top:557.58px;width:38.08px;height:14px;background:rgba(0,0,0,0.25);transform:rotate(-45deg);filter:blur(0.6px)"></div>
<div style="left:1131.96px;top:556.08px;width:38.08px;height:14px;background:#fefee8;border:1px solid #555;transform:rotate(-45deg);font-size:8.2px;line-height:12px;text-align:center;color:#222;letter-spacing:-0.1px;-webkit-text-stroke-width:0.15px">147,67</div>
<div style="left:1191.5px;top:515px;width:5.5px;height:312px;background:linear-gradient(90deg,rgba(0,0,0,0),rgba(0,0,0,0.16))"></div>
<div style="left:1197px;top:444px;width:2px;height:419px;background:#8c8c8c"></div>
<div style="left:604.5px;top:827px;width:592.5px;height:3.5px;background:linear-gradient(#b0b0b0,#a0a0a0)"></div>
<div style="left:604.5px;top:830.5px;width:592.5px;height:27.5px;background:linear-gradient(#fdfdfd 0%,#f0f0f0 50%,#e2e2e2 100%)"></div>
<div style="left:604.5px;top:858px;width:592.5px;height:5px;background:linear-gradient(#b8b8b8,#9c9c9c)"></div>
<div style="left:814px;top:841.8px;width:176px;height:15px;background:rgba(0,0,0,0.3);border-radius:2px;filter:blur(0.7px)"></div>
<div style="left:812.7px;top:840.5px;width:176px;height:14.8px;background:#fff;border:1px solid #404040;border-radius:2px"></div>
<div style="left:818px;top:844.2px;width:6.5px;height:7px;background:#ff0000;border:1px solid #333"></div>
<div style="left:829px;top:844.5px;font-size:8.51px;line-height:8.51px;color:#000;letter-spacing:-0.16px;-webkit-text-stroke-width:0.16px;">Soll</div>
<div style="left:851px;top:844.2px;width:6.5px;height:7px;background:#008000;border:1px solid #333"></div>
<div style="left:862px;top:844.5px;font-size:8.51px;line-height:8.51px;color:#000;letter-spacing:-0.16px;-webkit-text-stroke-width:0.16px;">Herde</div>
<div style="left:893px;top:844.2px;width:6.5px;height:7px;background:#0000ff;border:1px solid #333"></div>
<div style="left:904px;top:844.5px;font-size:8.51px;line-height:8.51px;color:#000;letter-spacing:-0.16px;-webkit-text-stroke-width:0.16px;">Gruppe</div>
<div style="left:940px;top:844.2px;width:6.5px;height:7px;background:#ffff00;border:1px solid #333"></div>
<div style="left:950.5px;top:844.5px;font-size:8.51px;line-height:8.51px;color:#000;letter-spacing:-0.16px;-webkit-text-stroke-width:0.16px;">Sau 912</div></body></html>
